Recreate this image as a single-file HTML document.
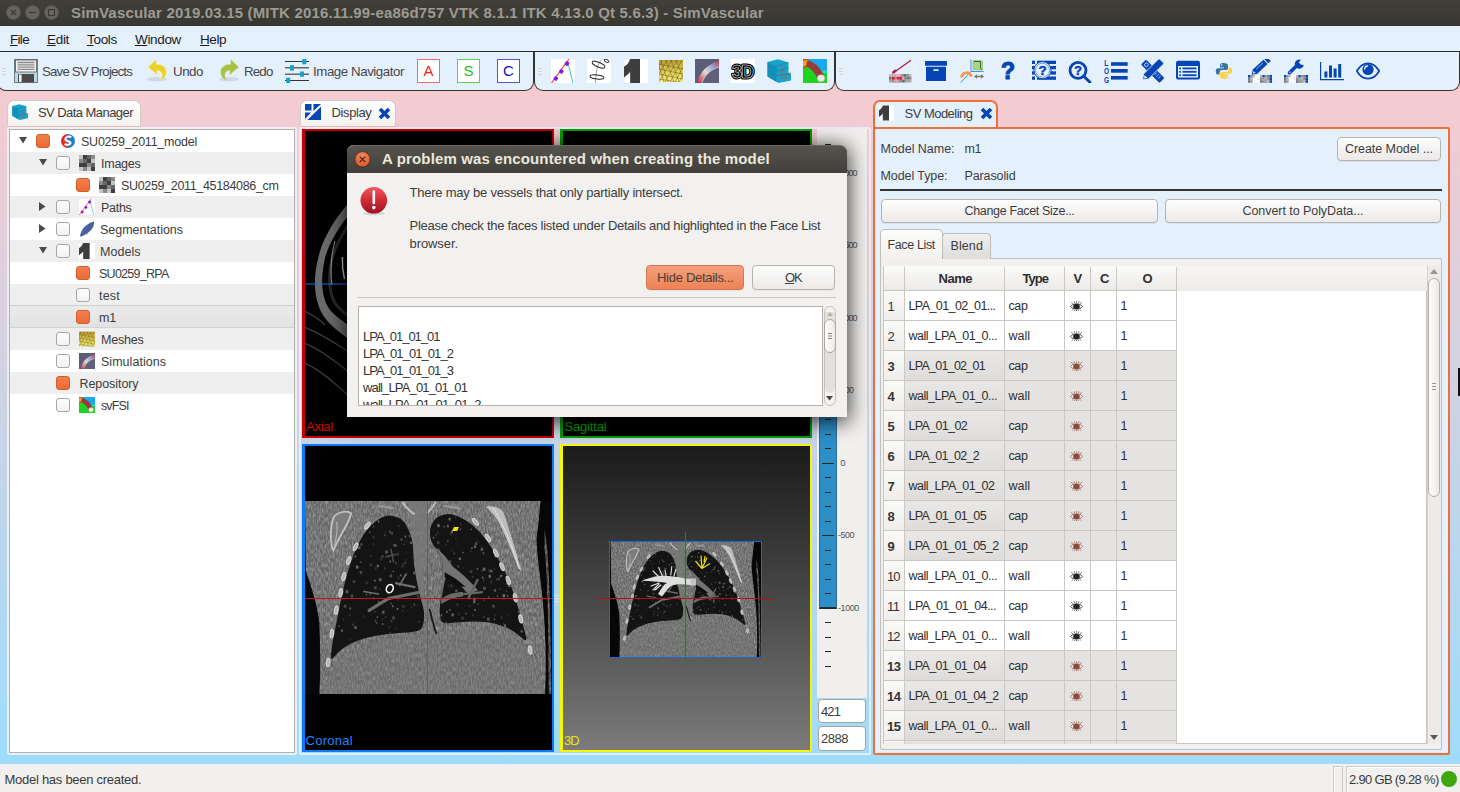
<!DOCTYPE html>
<html><head><meta charset="utf-8"><title>SimVascular</title>
<style>
*{box-sizing:border-box;margin:0;padding:0}
html,body{width:1460px;height:792px;overflow:hidden}
body{font-family:"Liberation Sans","DejaVu Sans",sans-serif;font-size:12.5px;color:#3c3c3c;position:relative;
 background:linear-gradient(180deg,#f5cbd0 0px,#f5cbd0 92px,#9edcfb 764px,#9edcfb 792px)}
.abs{position:absolute}
.t{position:absolute;white-space:nowrap;line-height:16px;height:16px}
#titlebar{left:0;top:0;width:1460px;height:26px;background:linear-gradient(180deg,#403f3a,#38372f)}
.wb{position:absolute;top:5px;width:15px;height:15px;border-radius:50%;background:#66645d;border:1px solid #55534d}
#menubar{left:0;top:26px;width:1460px;height:26px;background:#e5f0fd;border-bottom:1px solid #2a2a2a}
.tb{position:absolute;top:52px;height:39px;background:#e5f0fd;border:1px solid #333;border-top:none;border-radius:0 0 9px 9px}
.grip{position:absolute;top:68px;width:4px;height:7px;border-top:1px solid #dcd2c5;border-bottom:1px solid #dcd2c5}
.grip:after{content:"";position:absolute;left:0;top:2px;width:4px;height:1px;background:#dcd2c5}
.asc{position:absolute;top:59px;width:23px;height:24px;background:#fff;border:1px solid;font-size:15px;text-align:center;line-height:22px}
.ico{position:absolute;top:59px;width:24px;height:24px}
.tab{position:absolute;top:100px;height:26px;background:linear-gradient(180deg,#ffffff,#f3f1ef);border:1px solid #d2cdc7;border-bottom:none;border-radius:7px 7px 0 0}
.cb{position:absolute;width:14px;height:14px;border-radius:3px;border:1px solid #a9a59f;background:linear-gradient(180deg,#fdfdfd,#f4f3f2)}
.cb.on{border-color:#cf5f2c;background:linear-gradient(180deg,#f27f4d,#ec6a35)}
.row{position:absolute;left:11px;width:282px;height:22px}
.btn{position:absolute;border:1px solid #b7b3ad;border-radius:4px;background:linear-gradient(180deg,#fdfdfd,#eceae8);box-shadow:0 1px 0 rgba(0,0,0,.05)}
#statusbar{left:0;top:764px;width:1460px;height:28px;background:#f1f0ee}
</style></head><body>

<svg width="0" height="0" style="position:absolute"><defs>
<linearGradient id="gmesh" x1="0" y1="0" x2="0" y2="1"><stop offset="0" stop-color="#b99a2e"/><stop offset=".5" stop-color="#e3cf55"/><stop offset="1" stop-color="#f6ef7c"/></linearGradient>
<linearGradient id="gsim" x1="0" y1="1" x2="1" y2="0"><stop offset="0" stop-color="#c0283a"/><stop offset=".45" stop-color="#e9d9cf"/><stop offset=".7" stop-color="#9aa7d6"/><stop offset="1" stop-color="#c43a45"/></linearGradient>
<symbol id="s-path" viewBox="0 0 24 24"><rect width="24" height="24" fill="#fff"/><path d="M0.500 24L18 0" stroke="#ff3b3b" stroke-width="1.2"/><path d="M16.5 2.500L22 24" stroke="#35c8c8" stroke-width="1"/><g fill="#8d19e0"><rect x="2.800" y="17.500" width="4" height="4" rx="1.2" transform="rotate(35 4.8 19.5)"/><rect x="8.300" y="10.500" width="4" height="4" rx="1.2" transform="rotate(35 10.3 12.5)"/><rect x="14" y="2.500" width="4" height="4.200" rx="1.2" transform="rotate(35 16 4.5)"/></g></symbol>
<symbol id="s-seg" viewBox="0 0 24 24"><rect width="24" height="24" fill="#fff"/><path d="M8.500 24C8.500 12 11 4 15 0.500" fill="none" stroke="#666" stroke-width=".6"/><ellipse cx="11.500" cy="5.600" rx="6.800" ry="2.300" transform="rotate(24 11.5 5.6)" fill="none" stroke="#222" stroke-width="1"/><ellipse cx="10" cy="18" rx="7" ry="2" transform="rotate(6 10 18)" fill="none" stroke="#222" stroke-width="1"/><ellipse cx="19.500" cy="1.800" rx="2.600" ry="1.300" transform="rotate(30 19.5 1.8)" fill="none" stroke="#222" stroke-width=".9"/></symbol>
<symbol id="s-model" viewBox="0 0 24 24"><rect width="24" height="24" fill="#fff"/><path d="M6 0H16V24H6.500V12.500C5 14.500 2.500 16.500 0 18.500V7.500C2.500 6.500 5 4 6 0Z" fill="#3e3e3e"/><path d="M6.500 12.500V24" stroke="#2a2a2a" stroke-width=".6"/></symbol>
<symbol id="s-mesh" viewBox="0 0 24 22"><rect width="24" height="22" fill="url(#gmesh)"/><path d="M0 4l24 5M0 9l24 5M0 14l24 5M0 19l24 4M3 0l-3 6M8 0l-8 14M13 0L0 22M18 0L6 22M23 0L11 22M24 7l-8 15M24 15l-4 7M2 0l7 22M7 0l8 22M12 0l8 22M17 0l7 18M0 6l5 16" stroke="#4a3c10" stroke-width=".45" fill="none" opacity=".85"/></symbol>
<symbol id="s-sim" viewBox="0 0 24 24"><rect width="24" height="24" fill="#5b5d77"/><path d="M2 24C5 13 12 5 24 2V8C15 11 10 16 7 24Z" fill="url(#gsim)"/><path d="M7 24C10 16 15 11 24 8" stroke="#cfd6ee" stroke-width=".7" fill="none"/><path d="M8 24C11 17 16 13 24 11V24Z" fill="#5f607b"/></symbol>
<symbol id="s-3d" viewBox="0 0 24 24"><rect width="24" height="24" fill="#fff"/><g font-family="Liberation Sans,sans-serif" font-weight="bold" font-size="18" text-anchor="middle" style="letter-spacing:-1.2px"><text x="11.400" y="19.200" fill="#000" stroke="#000" stroke-width="3" stroke-linejoin="round">3D</text><text x="11.400" y="19.200" fill="#000" stroke="#fff" stroke-width=".550">3D</text></g></symbol>
<symbol id="s-cab" viewBox="0 0 24 24"><path d="M0.500 3L11 0.200L21.500 3.500V14.500L24 15.500V21.500L11.500 24L0.500 17.500Z" fill="#16a3cf"/><path d="M0.500 3L9.500 7V23L0.500 17.500Z" fill="#1390b8"/><path d="M9.500 7L21.500 3.500" stroke="#0f7fa3" stroke-width=".6"/><path d="M9.500 12l12-3M9.500 17l14.500-3" stroke="#0f7fa3" stroke-width=".7"/><path d="M13.500 8.300l4-1M13.500 13l4-1M15 19.500l5-1" stroke="#8a6f5e" stroke-width="1.300"/><path d="M9.500 16.800L23.800 14.800" stroke="#7a6a62" stroke-width="1.100"/></symbol>
<symbol id="s-fsi" viewBox="0 0 24 24"><rect width="24" height="24" fill="#21d321"/><path d="M3 0H24V12C20 13 16 10 14 7C10 3 6 2 3 0Z" fill="#19a9f2"/><path d="M15 11C18 12 22 12 24 11V14C21 14 18 14 16 13Z" fill="#22e0c8"/><path d="M0 0H5L6 6L0 10Z" fill="#f23a1e"/><path d="M0 2L4 1L5 5L0 8Z" fill="#f7a21e"/><path d="M5.500 1.500L8 2.500L7 4Z" fill="#2233dd"/><path d="M3.500 5C3 2.500 5.500 1.500 8 2.500C13 4.500 18.500 10 21 17L15 21C13 15 9 10.500 5 8.500C4 8 3.700 6.500 3.500 5Z" fill="#963c3c"/><ellipse cx="18" cy="19.200" rx="3.600" ry="3.400" fill="#f3e6e6" stroke="#e8bcbc" stroke-width=".6"/></symbol>
</defs></svg>

<!-- title bar -->
<div id="titlebar" class="abs">
 <div class="wb" style="left:6px"></div><div class="wb" style="left:25px"></div><div class="wb" style="left:44px"></div>
 <svg class="abs" style="left:6px;top:5px" width="54" height="15" viewBox="0 0 54 15"><path d="M5 5l5 5M10 5l-5 5" stroke="#3a3934" stroke-width="1.1"/><path d="M23 7.5h7" stroke="#3a3934" stroke-width="1.2"/><rect x="42.5" y="4.500" width="6" height="6" fill="none" stroke="#3a3934" stroke-width="1.1"/></svg>
<div class="t" style="left:71px;top:5px;font-size:15px;color:#9d9a92;font-weight:bold;letter-spacing:0.17px">SimVascular 2019.03.15 (MITK 2016.11.99-ea86d757 VTK 8.1.1 ITK 4.13.0 Qt 5.6.3) - SimVascular</div></div>
<!-- menu bar -->
<div id="menubar" class="abs"><div class="t" style="left:10px;top:5.5px;font-size:13.5px;color:#1c1c1c;letter-spacing:-0.69px"><u>F</u>ile</div><div class="t" style="left:47px;top:5.5px;font-size:13.5px;color:#1c1c1c;letter-spacing:-0.32px"><u>E</u>dit</div><div class="t" style="left:87px;top:5.5px;font-size:13.5px;color:#1c1c1c;letter-spacing:-0.30px"><u>T</u>ools</div><div class="t" style="left:135px;top:5.5px;font-size:13.5px;color:#1c1c1c;letter-spacing:-0.34px"><u>W</u>indow</div><div class="t" style="left:200px;top:5.5px;font-size:13.5px;color:#1c1c1c;letter-spacing:-0.44px"><u>H</u>elp</div></div>
<!-- toolbars -->
<div class="tb" style="left:-3px;width:537px"></div>
<div class="tb" style="left:534px;width:301px"></div>
<div class="tb" style="left:835px;width:625px"></div>
<div class="grip" style="left:2px"></div>
<div class="grip" style="left:538px"></div>
<div class="grip" style="left:839px"></div>
<svg class="ico" style="left:14px" viewBox="0 0 24 24"><rect x=".5" y=".5" width="23" height="23" fill="#b4dbe3" stroke="#6f7f86"/><rect x="1.5" y="1" width="21" height="12" fill="#f2f2f2" stroke="#555" stroke-width=".8"/><path d="M3.5 3.5h17M3.5 5.8h17M3.5 8.1h17M3.5 10.4h17" stroke="#8a8a8a" stroke-width="1.3"/><rect x="4" y="15" width="16" height="8.5" fill="#4a4a4a"/><rect x="5" y="15.5" width="2.6" height="7.5" fill="#f0f0f0"/></svg>
<svg class="ico" style="left:145px;top:58px;width:26px;height:26px" viewBox="0 0 24 24"><ellipse cx="11" cy="19.5" rx="9" ry="2" fill="#c9d3de" opacity=".8"/><path d="M3 8.5 L10 1.5 L10.5 6 C17 5.5 20.5 10 19.5 14.500 C18.7 18 16.5 20 14 20.5 C16 18 16.5 15 15 13 C14 11.8 12.5 11.3 11 11.5 L11.5 15.5 Z" fill="#e9d32a" stroke="#f3e98a" stroke-width=".6"/></svg>
<svg class="ico" style="left:216px;top:58px;width:26px;height:26px" viewBox="0 0 24 24"><ellipse cx="12" cy="19.5" rx="9" ry="2" fill="#c9d3de" opacity=".8"/><path d="M21 8.5 L14 1.5 L13.5 6 C7 5.5 3.5 10 4.5 14.500 C5.3 18 7.5 20 10 20.5 C8 18 7.5 15 9 13 C10 11.8 11.5 11.3 13 11.5 L12.5 15.5 Z" fill="#a9c043" stroke="#c8d88a" stroke-width=".6"/></svg>
<svg class="ico" style="left:285px" viewBox="0 0 24 24"><path d="M0 2.500h24M0 21.500h24" stroke="#333" stroke-width="1.200"/><path d="M0 8.800h24M0 15.200h24" stroke="#666" stroke-width="1.400"/><g fill="#10a3cf"><rect x="17.300" y="0" width="4" height="5.300"/><rect x="5" y="6.200" width="4" height="5.400"/><rect x="15" y="12.500" width="4" height="5.300"/><rect x="1.200" y="18.700" width="4" height="5.300"/></g></svg>
<div class="asc" style="left:417px;border-color:#f26a6a;color:#ee2222">A</div>
<div class="asc" style="left:457px;border-color:#55d455;color:#22bb22">S</div>
<div class="asc" style="left:497px;border-color:#5555cc;color:#1111cc">C</div>
<div class="t" style="left:42px;top:63.5px;font-size:13.3px;color:#474747;letter-spacing:-0.84px">Save SV Projects</div><div class="t" style="left:173px;top:63.5px;font-size:13.3px;color:#474747;letter-spacing:-0.45px">Undo</div><div class="t" style="left:244px;top:63.5px;font-size:13.3px;color:#474747;letter-spacing:-0.82px">Redo</div><div class="t" style="left:313px;top:63.5px;font-size:13.3px;color:#474747;letter-spacing:-0.44px">Image Navigator</div><svg class="ico" style="left:551px"><use href="#s-path"/></svg><svg class="ico" style="left:587px"><use href="#s-seg"/></svg><svg class="ico" style="left:624px"><use href="#s-model"/></svg><svg class="ico" style="left:659px;top:60px;height:22px"><use href="#s-mesh"/></svg><svg class="ico" style="left:695px"><use href="#s-sim"/></svg><svg class="ico" style="left:731px"><use href="#s-3d"/></svg><svg class="ico" style="left:767px"><use href="#s-cab"/></svg><svg class="ico" style="left:803px"><use href="#s-fsi"/></svg><svg class="ico" style="left:888px" viewBox="0 0 24 24"><path d="M23 1.200L7.500 12.300" stroke="#b5173f" stroke-width="1.300"/><ellipse cx="6.300" cy="12.600" rx="2.700" ry="1.300" transform="rotate(-36 6.3 12.6)" fill="#b5173f"/><rect x="1.00" y="15.00" width="2.50" height="2.83" fill="#bdbdbd"/><rect x="3.50" y="15.00" width="2.50" height="2.83" fill="#a5a5a5"/><rect x="6.00" y="15.00" width="2.50" height="2.83" fill="#7a7a7a"/><rect x="8.50" y="15.00" width="2.50" height="2.83" fill="#b0b0b0"/><rect x="11.00" y="15.00" width="2.50" height="2.83" fill="#8d8d8d"/><rect x="13.50" y="15.00" width="2.50" height="2.83" fill="#8d8d8d"/><rect x="16.00" y="15.00" width="2.50" height="2.83" fill="#6e6e6e"/><rect x="18.50" y="15.00" width="2.50" height="2.83" fill="#8d8d8d"/><rect x="21.00" y="15.00" width="2.50" height="2.83" fill="#bdbdbd"/><rect x="1.00" y="17.83" width="2.50" height="2.83" fill="#6e6e6e"/><rect x="3.50" y="17.83" width="2.50" height="2.83" fill="#8d8d8d"/><rect x="6.00" y="17.83" width="2.50" height="2.83" fill="#6e6e6e"/><rect x="8.50" y="17.83" width="2.50" height="2.83" fill="#a5a5a5"/><rect x="11.00" y="17.83" width="2.50" height="2.83" fill="#8d8d8d"/><rect x="13.50" y="17.83" width="2.50" height="2.83" fill="#8d8d8d"/><rect x="16.00" y="17.83" width="2.50" height="2.83" fill="#7a7a7a"/><rect x="18.50" y="17.83" width="2.50" height="2.83" fill="#7a7a7a"/><rect x="21.00" y="17.83" width="2.50" height="2.83" fill="#8d8d8d"/><rect x="1.00" y="20.67" width="2.50" height="2.83" fill="#a5a5a5"/><rect x="3.50" y="20.67" width="2.50" height="2.83" fill="#8d8d8d"/><rect x="6.00" y="20.67" width="2.50" height="2.83" fill="#6e6e6e"/><rect x="8.50" y="20.67" width="2.50" height="2.83" fill="#7a7a7a"/><rect x="11.00" y="20.67" width="2.50" height="2.83" fill="#8d8d8d"/><rect x="13.50" y="20.67" width="2.50" height="2.83" fill="#6e6e6e"/><rect x="16.00" y="20.67" width="2.50" height="2.83" fill="#8d8d8d"/><rect x="18.50" y="20.67" width="2.50" height="2.83" fill="#a5a5a5"/><rect x="21.00" y="20.67" width="2.50" height="2.83" fill="#b0b0b0"/><rect x="4" y="17.800" width="2.500" height="2.800" fill="#d91f45"/><rect x="6.500" y="17.800" width="2.500" height="2.800" fill="#e86a84"/><rect x="9" y="17.800" width="2.500" height="2.800" fill="#d91f45"/><rect x="11.500" y="17.800" width="2.500" height="2.800" fill="#d91f45"/><rect x="14" y="17.800" width="2.500" height="2.800" fill="#e3a0ae"/><rect x="5" y="15" width="8" height="2.800" fill="#f3b6c4" opacity=".7"/><rect x="6" y="20.600" width="5" height="2.800" fill="#f3b6c4" opacity=".7"/></svg><svg class="ico" style="left:924px" viewBox="0 0 24 24"><rect x="1" y="2" width="22" height="4.800" rx=".6" fill="#0645b4"/><rect x="2" y="7.800" width="20" height="14.200" rx=".6" fill="#0645b4"/><rect x="9.400" y="10.300" width="5.200" height="1.800" rx=".5" fill="#e5f0fd"/></svg><svg class="ico" style="left:960px" viewBox="0 0 24 24"><path d="M11 0.500V12.500H23.500M11 12.500L0.700 23.500" fill="none" stroke="#2a8ae0" stroke-width=".9"/><rect x="13" y="1.700" width="9.300" height="9.300" fill="#a6d48a" stroke="#86c060" stroke-width=".6"/><path d="M14 2.500H20.500V9M20.500 9L22 10.800" stroke="#2f5f20" stroke-width=".9" fill="none"/><path d="M1.500 18.500C2 13.500 9 11.500 11.500 17.500" fill="none" stroke="#f39a5a" stroke-width="2.900"/><path d="M14 17.500l3-2.300v1.500h4v-1.500l3 2.300l-3 2.300v-1.500h-4v1.500z" fill="#777"/></svg><div class="abs" style="left:996px;top:59px;width:24px;height:24px;text-align:center;font-weight:bold;font-size:23px;line-height:25px;color:#0645b4;-webkit-text-stroke:1.100px #0645b4">?</div><svg class="ico" style="left:1032px" viewBox="0 0 24 24"><g fill="#0645b4"><rect x="0" y="1.700" width="3" height="3.300"/><rect x="0" y="7" width="3" height="3.300"/><rect x="0" y="12.300" width="3" height="3.300"/><rect x="0" y="17.500" width="3" height="3.300"/><rect x="5" y="1.700" width="19" height="3.300"/><rect x="5" y="7" width="19" height="3.300"/><rect x="5" y="12.300" width="19" height="3.300"/><rect x="5" y="17.500" width="19" height="3.300"/></g><circle cx="10.500" cy="11.200" r="8.600" fill="#e5f0fd" stroke="#0645b4" stroke-width="1"/><circle cx="10.500" cy="11.200" r="7" fill="none" stroke="#0645b4" stroke-width=".5"/><text x="10.500" y="16" text-anchor="middle" font-family="Liberation Sans,sans-serif" font-weight="bold" font-size="13.500" fill="#0645b4" stroke="#0645b4" stroke-width=".4">?</text></svg><svg class="ico" style="left:1068px" viewBox="0 0 24 24"><circle cx="10" cy="11.300" r="8" fill="none" stroke="#0645b4" stroke-width="2.800"/><path d="M16 17.500L21.800 23" stroke="#0645b4" stroke-width="3" stroke-linecap="round"/><text x="10" y="15.800" text-anchor="middle" font-family="Liberation Sans,sans-serif" font-weight="bold" font-size="12.500" fill="#0645b4" stroke="#0645b4" stroke-width=".5">?</text></svg><svg class="ico" style="left:1104px" viewBox="0 0 24 24"><g font-family="Liberation Sans,sans-serif" font-weight="bold" font-size="8.200" fill="#0645b4" transform="scale(.8 1)"><text x="0.300" y="6.600">L</text><text x="0" y="15.300">O</text><text x="0" y="24">G</text></g><g fill="#0645b4"><rect x="7" y="3.200" width="16.700" height="3.600"/><rect x="7" y="10" width="16.700" height="3.700"/><rect x="7" y="17" width="16.700" height="3.600"/></g></svg><svg class="ico" style="left:1140px" viewBox="0 0 24 24"><g transform="rotate(45 12 11.500)"><rect x="0" y="8" width="26" height="7" rx="1" fill="#0645b4"/><path d="M17 9.500v3M19.500 9.500v3M22 9.500v3" stroke="#e5f0fd" stroke-width=".8"/><circle cx="4" cy="11.500" r="1.800" fill="none" stroke="#e5f0fd" stroke-width=".8"/></g><g transform="rotate(-45 12 11.500)"><path d="M-1 11.500L3.500 8H24.500a1 1 0 0 1 1 1V14a1 1 0 0 1 -1 1H3.500Z" fill="#0645b4" stroke="#e5f0fd" stroke-width=".8"/><path d="M0.800 11.500L3.500 9.300V13.700Z" fill="#e5f0fd"/></g></svg><svg class="ico" style="left:1176px" viewBox="0 0 24 24"><rect x="0" y="1.700" width="24" height="18.800" rx="2" fill="#0645b4"/><rect x="2" y="7" width="20" height="11.500" fill="#e5f0fd"/><g fill="#0645b4"><rect x="3.300" y="8.500" width="1.700" height="1.800"/><rect x="3.300" y="11.900" width="1.700" height="1.800"/><rect x="3.300" y="15.300" width="1.700" height="1.800"/><rect x="6.500" y="8.500" width="14" height="1.800"/><rect x="6.500" y="11.900" width="14" height="1.800"/><rect x="6.500" y="15.300" width="14" height="1.800"/></g></svg><svg class="ico" style="left:1212px" viewBox="0 0 24 24"><path d="M11.500 4C8.500 4 8 5.200 8 6.500V8.500H12V9.300H6C4.500 9.300 3.800 10.500 3.800 12.500C3.800 14.500 4.500 15.500 6 15.500H7.500V13.500C7.500 12 8.700 11 10 11H14C15.200 11 16 10.200 16 9V6.500C16 5 14.500 4 11.500 4Z" fill="#3872a4"/><circle cx="9.700" cy="6" r=".8" fill="#e5f0fd"/><path d="M12.500 20C15.500 20 16 18.800 16 17.500V15.500H12V14.700H18C19.500 14.700 20.200 13.500 20.200 11.500C20.200 9.500 19.500 8.500 18 8.500H16.500V10.500C16.500 12 15.300 13 14 13H10C8.800 13 8 13.800 8 15V17.500C8 19 9.500 20 12.500 20Z" fill="#ffd23f"/><circle cx="14.300" cy="18" r=".8" fill="#e5f0fd"/></svg><svg class="ico" style="left:1248px" viewBox="0 0 24 24"><g transform="rotate(-43 12 8)"><path d="M0.500 8L5 5H19.500V11H5Z" fill="#0645b4"/><rect x="20.500" y="5" width="3.500" height="6" rx=".8" fill="#0645b4"/><path d="M2 8L4.600 6.600V9.400Z" fill="#e5f0fd"/><path d="M8 7h9" stroke="#e5f0fd" stroke-width=".6"/></g><rect x="0.0" y="16.0" width="2.400" height="2.600" fill="#0645b4"/><rect x="2.4" y="16.0" width="2.400" height="2.600" fill="#8c8c8c"/><rect x="4.8" y="16.0" width="2.400" height="2.600" fill="#c4c4c4"/><rect x="7.2" y="16.0" width="2.400" height="2.600" fill="#fbfbfb"/><rect x="9.6" y="16.0" width="2.400" height="2.600" fill="#fbfbfb"/><rect x="12.0" y="16.0" width="2.400" height="2.600" fill="#b0b0b0"/><rect x="14.4" y="16.0" width="2.400" height="2.600" fill="#0645b4"/><rect x="16.8" y="16.0" width="2.400" height="2.600" fill="#9c9c9c"/><rect x="19.2" y="16.0" width="2.400" height="2.600" fill="#777"/><rect x="21.6" y="16.0" width="2.400" height="2.600" fill="#0645b4"/><rect x="0.0" y="18.6" width="2.400" height="2.600" fill="#777"/><rect x="2.4" y="18.6" width="2.400" height="2.600" fill="#b0b0b0"/><rect x="4.8" y="18.6" width="2.400" height="2.600" fill="#fbfbfb"/><rect x="7.2" y="18.6" width="2.400" height="2.600" fill="#fbfbfb"/><rect x="9.6" y="18.6" width="2.400" height="2.600" fill="#e8e8e8"/><rect x="12.0" y="18.6" width="2.400" height="2.600" fill="#8c8c8c"/><rect x="14.4" y="18.6" width="2.400" height="2.600" fill="#9c9c9c"/><rect x="16.8" y="18.6" width="2.400" height="2.600" fill="#b0b0b0"/><rect x="19.2" y="18.6" width="2.400" height="2.600" fill="#8c8c8c"/><rect x="21.6" y="18.6" width="2.400" height="2.600" fill="#0645b4"/><rect x="0.0" y="21.2" width="2.400" height="2.600" fill="#777"/><rect x="2.4" y="21.2" width="2.400" height="2.600" fill="#9c9c9c"/><rect x="4.8" y="21.2" width="2.400" height="2.600" fill="#fbfbfb"/><rect x="7.2" y="21.2" width="2.400" height="2.600" fill="#fbfbfb"/><rect x="9.6" y="21.2" width="2.400" height="2.600" fill="#fbfbfb"/><rect x="12.0" y="21.2" width="2.400" height="2.600" fill="#777"/><rect x="14.4" y="21.2" width="2.400" height="2.600" fill="#8c8c8c"/><rect x="16.8" y="21.2" width="2.400" height="2.600" fill="#9c9c9c"/><rect x="19.2" y="21.2" width="2.400" height="2.600" fill="#b0b0b0"/><rect x="21.6" y="21.2" width="2.400" height="2.600" fill="#0645b4"/></svg><svg class="ico" style="left:1284px" viewBox="0 0 24 24"><path d="M5.500 13.800L14 5.500" stroke="#0645b4" stroke-width="3.600" stroke-linecap="round"/><path d="M19.800 6.300A4.600 4.600 0 1 1 16.800 0.700L14.800 3.700L16.800 5.600Z" fill="#0645b4"/><circle cx="6" cy="13.300" r=".7" fill="#e5f0fd"/><rect x="0.0" y="16.0" width="2.400" height="2.600" fill="#0645b4"/><rect x="2.4" y="16.0" width="2.400" height="2.600" fill="#8c8c8c"/><rect x="4.8" y="16.0" width="2.400" height="2.600" fill="#c4c4c4"/><rect x="7.2" y="16.0" width="2.400" height="2.600" fill="#fbfbfb"/><rect x="9.6" y="16.0" width="2.400" height="2.600" fill="#fbfbfb"/><rect x="12.0" y="16.0" width="2.400" height="2.600" fill="#b0b0b0"/><rect x="14.4" y="16.0" width="2.400" height="2.600" fill="#0645b4"/><rect x="16.8" y="16.0" width="2.400" height="2.600" fill="#9c9c9c"/><rect x="19.2" y="16.0" width="2.400" height="2.600" fill="#777"/><rect x="21.6" y="16.0" width="2.400" height="2.600" fill="#0645b4"/><rect x="0.0" y="18.6" width="2.400" height="2.600" fill="#777"/><rect x="2.4" y="18.6" width="2.400" height="2.600" fill="#b0b0b0"/><rect x="4.8" y="18.6" width="2.400" height="2.600" fill="#fbfbfb"/><rect x="7.2" y="18.6" width="2.400" height="2.600" fill="#fbfbfb"/><rect x="9.6" y="18.6" width="2.400" height="2.600" fill="#e8e8e8"/><rect x="12.0" y="18.6" width="2.400" height="2.600" fill="#8c8c8c"/><rect x="14.4" y="18.6" width="2.400" height="2.600" fill="#9c9c9c"/><rect x="16.8" y="18.6" width="2.400" height="2.600" fill="#b0b0b0"/><rect x="19.2" y="18.6" width="2.400" height="2.600" fill="#8c8c8c"/><rect x="21.6" y="18.6" width="2.400" height="2.600" fill="#0645b4"/><rect x="0.0" y="21.2" width="2.400" height="2.600" fill="#777"/><rect x="2.4" y="21.2" width="2.400" height="2.600" fill="#9c9c9c"/><rect x="4.8" y="21.2" width="2.400" height="2.600" fill="#fbfbfb"/><rect x="7.2" y="21.2" width="2.400" height="2.600" fill="#fbfbfb"/><rect x="9.6" y="21.2" width="2.400" height="2.600" fill="#fbfbfb"/><rect x="12.0" y="21.2" width="2.400" height="2.600" fill="#777"/><rect x="14.4" y="21.2" width="2.400" height="2.600" fill="#8c8c8c"/><rect x="16.8" y="21.2" width="2.400" height="2.600" fill="#9c9c9c"/><rect x="19.2" y="21.2" width="2.400" height="2.600" fill="#b0b0b0"/><rect x="21.6" y="21.2" width="2.400" height="2.600" fill="#0645b4"/></svg><svg class="ico" style="left:1320px" viewBox="0 0 24 24"><path d="M0.600 3V20.700H24" fill="none" stroke="#0645b4" stroke-width="1.200"/><g fill="#0645b4"><rect x="4.400" y="12.500" width="3" height="6"/><rect x="9" y="6.500" width="3" height="12"/><rect x="13.600" y="9.500" width="3" height="9"/><rect x="18.200" y="5" width="3" height="13.500"/></g></svg><svg class="ico" style="left:1356px" viewBox="0 0 24 24"><path d="M0.800 12C4 6.500 8 4.300 12 4.300C16 4.300 20 6.500 23.200 12C20 17.500 16 19.700 12 19.700C8 19.700 4 17.500 0.800 12Z" fill="#e5f0fd" stroke="#0645b4" stroke-width="1.700"/><circle cx="12" cy="10.500" r="5.600" fill="#0645b4"/><path d="M8.600 10A3.300 3.300 0 0 1 11.500 7" stroke="#e5f0fd" stroke-width="1.300" fill="none" stroke-linecap="round"/></svg>
<!-- SV Data Manager -->
<div class="tab" style="left:7px;width:134px"></div><div class="abs" style="left:8px;top:126px;width:133px;height:1px;background:#e9b9bf"></div><svg class="abs" style="left:12px;top:104px" width="16" height="16"><use href="#s-cab"/></svg><div class="t" style="left:38px;top:104.5px;font-size:13px;letter-spacing:-0.56px">SV Data Manager</div><div class="abs" style="left:7px;top:127px;width:290px;height:628px;border:2px solid rgba(240,243,250,.85);border-radius:2px"></div><div class="abs" style="left:9px;top:129px;width:286px;height:624px;background:#fff;border:1px solid #b4afa9"></div><div class="row" style="left:10px;width:284px;top:152px;background:#efefef"></div><div class="row" style="left:10px;width:284px;top:196px;background:#efefef"></div><div class="row" style="left:10px;width:284px;top:240px;background:#efefef"></div><div class="row" style="left:10px;width:284px;top:284px;background:#efefef"></div><div class="row" style="left:10px;width:284px;top:305px;height:23px;background:linear-gradient(180deg,#ebebeb,#e2e2e2);border-top:1px solid #cfcfcf;border-bottom:1px solid #d4d4d4"></div><div class="row" style="left:10px;width:284px;top:328px;background:#efefef"></div><div class="row" style="left:10px;width:284px;top:372px;background:#efefef"></div><svg class="abs" style="left:19px;top:137px" width="8" height="7"><path d="M0 0H8L4 6.500Z" fill="#4a4a4a"/></svg><div class="cb on" style="left:36px;top:134px"></div><svg class="abs" style="left:61px;top:134px" width="14" height="14" viewBox="0 0 14 14"><path d="M7 0A7 7 0 0 0 7 14Z" fill="#e02a2a"/><path d="M7 0A7 7 0 0 1 7 14Z" fill="#1f7fc8"/><path d="M10.300 3.200C8 1.800 4.600 2.600 4.400 5C4.200 7.500 9.600 6.800 9.500 9C9.400 11 6 11.300 3.600 10" fill="none" stroke="#fff" stroke-width="2.100"/></svg><div class="t" style="left:81px;top:134px;letter-spacing:-0.24px">SU0259_2011_model</div><svg class="abs" style="left:39px;top:159px" width="8" height="7"><path d="M0 0H8L4 6.500Z" fill="#4a4a4a"/></svg><div class="cb" style="left:56px;top:156px"></div><svg class="abs" style="left:79px;top:155px" width="16" height="16" viewBox="0 0 16 16"><rect width="16" height="16" fill="#8a8a8a"/><g fill="#3f3f3f"><rect x="4" y="0" width="4" height="4"/><rect x="8" y="4" width="4" height="4"/><rect x="0" y="8" width="4" height="4"/><rect x="12" y="12" width="4" height="4"/><rect x="4" y="8" width="4" height="4"/></g><g fill="#c4c4c4"><rect x="0" y="0" width="4" height="4"/><rect x="12" y="4" width="4" height="4"/><rect x="8" y="12" width="4" height="4"/><rect x="0" y="12" width="4" height="4"/></g><g fill="#666"><rect x="8" y="0" width="4" height="4"/><rect x="4" y="4" width="4" height="4"/><rect x="12" y="8" width="4" height="4"/></g></svg><div class="t" style="left:101px;top:156px;letter-spacing:-0.25px">Images</div><div class="cb on" style="left:76px;top:178px"></div><svg class="abs" style="left:99px;top:177px" width="16" height="16" viewBox="0 0 16 16"><rect width="16" height="16" fill="#8a8a8a"/><g fill="#3f3f3f"><rect x="4" y="0" width="4" height="4"/><rect x="8" y="4" width="4" height="4"/><rect x="0" y="8" width="4" height="4"/><rect x="12" y="12" width="4" height="4"/><rect x="4" y="8" width="4" height="4"/></g><g fill="#c4c4c4"><rect x="0" y="0" width="4" height="4"/><rect x="12" y="4" width="4" height="4"/><rect x="8" y="12" width="4" height="4"/><rect x="0" y="12" width="4" height="4"/></g><g fill="#666"><rect x="8" y="0" width="4" height="4"/><rect x="4" y="4" width="4" height="4"/><rect x="12" y="8" width="4" height="4"/></g></svg><div class="t" style="left:121px;top:178px;letter-spacing:-0.33px">SU0259_2011_45184086_cm</div><svg class="abs" style="left:39px;top:202px" width="7" height="9"><path d="M0 0L6.500 4.500L0 9Z" fill="#4a4a4a"/></svg><div class="cb" style="left:56px;top:200px"></div><svg class="abs" style="left:79px;top:199px" width="16" height="16"><use href="#s-path"/></svg><div class="t" style="left:101px;top:200px;letter-spacing:-0.29px">Paths</div><svg class="abs" style="left:39px;top:224px" width="7" height="9"><path d="M0 0L6.500 4.500L0 9Z" fill="#4a4a4a"/></svg><div class="cb" style="left:56px;top:222px"></div><svg class="abs" style="left:79px;top:221px" width="16" height="16" viewBox="0 0 16 16"><path d="M1 15.500C2 9 6 3 15 0.500C15.500 5 13 9 8 12.500C6 14 3 15.500 1 15.500Z" fill="#3f63a8"/><path d="M4 9.500l5 4M7.500 5.500l5 4M11 2.500l3.500 3.500" stroke="#c0392b" stroke-width=".6"/></svg><div class="t" style="left:100px;top:222px;letter-spacing:-0.03px">Segmentations</div><svg class="abs" style="left:39px;top:247px" width="8" height="7"><path d="M0 0H8L4 6.500Z" fill="#4a4a4a"/></svg><div class="cb" style="left:56px;top:244px"></div><svg class="abs" style="left:79px;top:243px" width="16" height="16"><use href="#s-model"/></svg><div class="t" style="left:100px;top:244px;letter-spacing:0.03px">Models</div><div class="cb on" style="left:76px;top:266px"></div><div class="t" style="left:99px;top:266px;letter-spacing:-0.74px">SU0259_RPA</div><div class="cb" style="left:76px;top:288px"></div><div class="t" style="left:99px;top:288px;letter-spacing:0.21px">test</div><div class="cb on" style="left:76px;top:310px"></div><div class="t" style="left:99px;top:310px;letter-spacing:-0.19px">m1</div><div class="cb" style="left:56px;top:332px"></div><svg class="abs" style="left:79px;top:331px" width="16" height="16"><use href="#s-mesh"/></svg><div class="t" style="left:101px;top:332px;letter-spacing:-0.21px">Meshes</div><div class="cb" style="left:56px;top:354px"></div><svg class="abs" style="left:79px;top:353px" width="16" height="16"><use href="#s-sim"/></svg><div class="t" style="left:101px;top:354px;letter-spacing:0.03px">Simulations</div><div class="cb on" style="left:56px;top:376px"></div><div class="t" style="left:79.5px;top:376px;letter-spacing:-0.07px">Repository</div><div class="cb" style="left:56px;top:398px"></div><svg class="abs" style="left:79px;top:397px" width="16" height="16"><use href="#s-fsi"/></svg><div class="t" style="left:101px;top:398px;letter-spacing:-0.89px">svFSI</div>
<svg width="0" height="0" style="position:absolute"><defs>
<filter id="grain" x="0" y="0" width="100%" height="100%"><feTurbulence type="fractalNoise" baseFrequency=".17 .055" numOctaves="2" seed="4" result="n"/><feColorMatrix in="n" type="matrix" values="0 0 0 0 0  0 0 0 0 0  0 0 0 0 0  .22 .22 .22 0 -.27" result="a"/><feFlood flood-color="#fff" result="w"/><feComposite in="w" in2="a" operator="in" result="g"/><feComposite in="g" in2="SourceGraphic" operator="in" result="gg"/><feMerge><feMergeNode in="SourceGraphic"/><feMergeNode in="gg"/></feMerge></filter>
<clipPath id="lclip"><path d="M330.0 66.0Q350.0 62.0 375.0 71.0Q400.0 80.0 412.5 105.0Q425.0 130.0 432.5 155.0Q440.0 180.0 440.0 215.0Q440.0 250.0 447.5 290.0Q455.0 330.0 462.5 365.0Q470.0 400.0 477.5 425.0Q485.0 450.0 483.5 475.0Q482.0 500.0 476.0 513.5Q470.0 527.0 445.0 531.0Q420.0 535.0 375.0 537.5Q330.0 540.0 290.0 547.5Q250.0 555.0 215.0 567.5Q180.0 580.0 155.0 600.0Q130.0 620.0 118.0 636.0Q106.0 652.0 109.5 616.0Q113.0 580.0 121.5 540.0Q130.0 500.0 137.5 460.0Q145.0 420.0 152.5 385.0Q160.0 350.0 172.5 305.0Q185.0 260.0 200.0 220.0Q215.0 180.0 237.5 145.0Q260.0 110.0 285.0 90.0Q310.0 70.0 330.0 66.0Z"/><path d="M620.0 67.5Q590.0 55.0 565.0 60.0Q540.0 65.0 525.0 82.5Q510.0 100.0 507.5 125.0Q505.0 150.0 512.5 167.5Q520.0 185.0 532.5 200.0Q545.0 215.0 552.5 237.5Q560.0 260.0 557.5 295.0Q555.0 330.0 553.5 360.0Q552.0 390.0 548.5 415.0Q545.0 440.0 547.5 470.0Q550.0 500.0 575.0 497.5Q600.0 495.0 650.0 491.5Q700.0 488.0 740.0 494.0Q780.0 500.0 815.0 515.0Q850.0 530.0 876.0 556.0Q902.0 582.0 891.0 541.0Q880.0 500.0 870.0 465.0Q860.0 430.0 847.5 390.0Q835.0 350.0 817.5 310.0Q800.0 270.0 780.0 235.0Q760.0 200.0 735.0 165.0Q710.0 130.0 680.0 105.0Q650.0 80.0 620.0 67.5Z"/></clipPath>
<symbol id="s-ct" viewBox="0 6 998 776" preserveAspectRatio="none"><rect x="0" y="0" width="998" height="790" fill="#070707"/>
<g filter="url(#grain)"><path d="M4 6H952C946 60 944 100 936 150C934 200 950 300 960 400C972 520 976 650 970 782H62C66 700 66 600 62 500C56 430 30 350 8 290Z" fill="#656565"/><path d="M968 120C985 200 992 400 996 782H985C984 500 980 300 968 200Z" fill="#3a3a3a"/></g>
<path d="M140 640C300 540 480 520 560 560C640 500 800 500 900 600L972 782H62Z" fill="#767676" opacity=".35"/>
<path d="M330.0 66.0Q350.0 62.0 375.0 71.0Q400.0 80.0 412.5 105.0Q425.0 130.0 432.5 155.0Q440.0 180.0 440.0 215.0Q440.0 250.0 447.5 290.0Q455.0 330.0 462.5 365.0Q470.0 400.0 477.5 425.0Q485.0 450.0 483.5 475.0Q482.0 500.0 476.0 513.5Q470.0 527.0 445.0 531.0Q420.0 535.0 375.0 537.5Q330.0 540.0 290.0 547.5Q250.0 555.0 215.0 567.5Q180.0 580.0 155.0 600.0Q130.0 620.0 118.0 636.0Q106.0 652.0 109.5 616.0Q113.0 580.0 121.5 540.0Q130.0 500.0 137.5 460.0Q145.0 420.0 152.5 385.0Q160.0 350.0 172.5 305.0Q185.0 260.0 200.0 220.0Q215.0 180.0 237.5 145.0Q260.0 110.0 285.0 90.0Q310.0 70.0 330.0 66.0Z" fill="#141414"/><path d="M620.0 67.5Q590.0 55.0 565.0 60.0Q540.0 65.0 525.0 82.5Q510.0 100.0 507.5 125.0Q505.0 150.0 512.5 167.5Q520.0 185.0 532.5 200.0Q545.0 215.0 552.5 237.5Q560.0 260.0 557.5 295.0Q555.0 330.0 553.5 360.0Q552.0 390.0 548.5 415.0Q545.0 440.0 547.5 470.0Q550.0 500.0 575.0 497.5Q600.0 495.0 650.0 491.5Q700.0 488.0 740.0 494.0Q780.0 500.0 815.0 515.0Q850.0 530.0 876.0 556.0Q902.0 582.0 891.0 541.0Q880.0 500.0 870.0 465.0Q860.0 430.0 847.5 390.0Q835.0 350.0 817.5 310.0Q800.0 270.0 780.0 235.0Q760.0 200.0 735.0 165.0Q710.0 130.0 680.0 105.0Q650.0 80.0 620.0 67.5Z" fill="#141414"/>
<g clip-path="url(#lclip)"><rect x="277" y="392" width="8" height="10" fill="#333"/><rect x="298" y="409" width="6" height="8" fill="#6a6a6a"/><rect x="286" y="424" width="6" height="8" fill="#3c3c3c"/><rect x="275" y="146" width="10" height="12" fill="#2c2c2c"/><rect x="346" y="413" width="8" height="10" fill="#333"/><rect x="354" y="425" width="6" height="8" fill="#6a6a6a"/><rect x="282" y="322" width="6" height="8" fill="#6a6a6a"/><rect x="195" y="236" width="5" height="6" fill="#2c2c2c"/><rect x="260" y="387" width="5" height="6" fill="#2c2c2c"/><rect x="202" y="509" width="10" height="12" fill="#5c5c5c"/><rect x="375" y="310" width="10" height="12" fill="#2c2c2c"/><rect x="181" y="460" width="6" height="8" fill="#3c3c3c"/><rect x="157" y="479" width="5" height="6" fill="#3c3c3c"/><rect x="282" y="349" width="10" height="12" fill="#4a4a4a"/><rect x="276" y="175" width="6" height="8" fill="#333"/><rect x="350" y="131" width="8" height="10" fill="#4a4a4a"/><rect x="334" y="402" width="5" height="6" fill="#4a4a4a"/><rect x="399" y="256" width="6" height="8" fill="#333"/><rect x="327" y="205" width="10" height="12" fill="#5c5c5c"/><rect x="247" y="329" width="10" height="12" fill="#333"/><rect x="421" y="142" width="8" height="10" fill="#4a4a4a"/><rect x="344" y="245" width="6" height="8" fill="#6a6a6a"/><rect x="440" y="418" width="8" height="10" fill="#3c3c3c"/><rect x="373" y="214" width="10" height="12" fill="#333"/><rect x="379" y="103" width="6" height="8" fill="#333"/><rect x="339" y="227" width="6" height="8" fill="#2c2c2c"/><rect x="323" y="140" width="6" height="8" fill="#4a4a4a"/><rect x="355" y="470" width="10" height="12" fill="#4a4a4a"/><rect x="286" y="273" width="6" height="8" fill="#3c3c3c"/><rect x="289" y="493" width="6" height="8" fill="#4a4a4a"/><rect x="313" y="497" width="6" height="8" fill="#5c5c5c"/><rect x="239" y="466" width="5" height="6" fill="#333"/><rect x="357" y="286" width="5" height="6" fill="#6a6a6a"/><rect x="264" y="257" width="10" height="12" fill="#333"/><rect x="138" y="505" width="5" height="6" fill="#5c5c5c"/><rect x="334" y="346" width="6" height="8" fill="#2c2c2c"/><rect x="149" y="522" width="8" height="10" fill="#5c5c5c"/><rect x="160" y="423" width="10" height="12" fill="#4a4a4a"/><rect x="392" y="264" width="8" height="10" fill="#333"/><rect x="358" y="179" width="8" height="10" fill="#4a4a4a"/><rect x="440" y="289" width="10" height="12" fill="#5c5c5c"/><rect x="251" y="369" width="6" height="8" fill="#2c2c2c"/><rect x="277" y="106" width="5" height="6" fill="#5c5c5c"/><rect x="375" y="399" width="6" height="8" fill="#2c2c2c"/><rect x="275" y="434" width="6" height="8" fill="#3c3c3c"/><rect x="365" y="180" width="8" height="10" fill="#5c5c5c"/><rect x="285" y="483" width="6" height="8" fill="#4a4a4a"/><rect x="209" y="266" width="10" height="12" fill="#6a6a6a"/><rect x="339" y="508" width="8" height="10" fill="#2c2c2c"/><rect x="459" y="488" width="6" height="8" fill="#333"/><rect x="278" y="431" width="5" height="6" fill="#333"/><rect x="314" y="447" width="10" height="12" fill="#5c5c5c"/><rect x="282" y="446" width="6" height="8" fill="#3c3c3c"/><rect x="349" y="485" width="6" height="8" fill="#4a4a4a"/><rect x="406" y="251" width="5" height="6" fill="#5c5c5c"/><rect x="297" y="84" width="6" height="8" fill="#6a6a6a"/><rect x="266" y="224" width="5" height="6" fill="#4a4a4a"/><rect x="409" y="164" width="6" height="8" fill="#2c2c2c"/><rect x="405" y="145" width="6" height="8" fill="#6a6a6a"/><rect x="447" y="368" width="8" height="10" fill="#333"/><rect x="325" y="469" width="6" height="8" fill="#333"/><rect x="306" y="233" width="10" height="12" fill="#2c2c2c"/><rect x="168" y="365" width="10" height="12" fill="#5c5c5c"/><rect x="224" y="287" width="10" height="12" fill="#4a4a4a"/><rect x="312" y="223" width="8" height="10" fill="#4a4a4a"/><rect x="262" y="129" width="5" height="6" fill="#6a6a6a"/><rect x="249" y="380" width="5" height="6" fill="#6a6a6a"/><rect x="454" y="383" width="10" height="12" fill="#3c3c3c"/><rect x="292" y="470" width="5" height="6" fill="#6a6a6a"/><rect x="409" y="300" width="6" height="8" fill="#333"/><rect x="293" y="262" width="8" height="10" fill="#6a6a6a"/><rect x="226" y="175" width="10" height="12" fill="#3c3c3c"/><rect x="366" y="252" width="6" height="8" fill="#4a4a4a"/><rect x="341" y="124" width="10" height="12" fill="#3c3c3c"/><rect x="429" y="430" width="6" height="8" fill="#2c2c2c"/><rect x="307" y="320" width="8" height="10" fill="#2c2c2c"/><rect x="263" y="374" width="6" height="8" fill="#6a6a6a"/><rect x="183" y="434" width="6" height="8" fill="#6a6a6a"/><rect x="188" y="382" width="10" height="12" fill="#4a4a4a"/><rect x="194" y="499" width="6" height="8" fill="#4a4a4a"/><rect x="226" y="248" width="6" height="8" fill="#4a4a4a"/><rect x="401" y="177" width="5" height="6" fill="#4a4a4a"/><rect x="312" y="478" width="6" height="8" fill="#333"/><rect x="344" y="533" width="5" height="6" fill="#4a4a4a"/><rect x="322" y="273" width="6" height="8" fill="#3c3c3c"/><rect x="373" y="436" width="6" height="8" fill="#6a6a6a"/><rect x="410" y="346" width="5" height="6" fill="#3c3c3c"/><rect x="395" y="424" width="10" height="12" fill="#333"/><rect x="183" y="558" width="6" height="8" fill="#2c2c2c"/><rect x="396" y="255" width="8" height="10" fill="#333"/><rect x="301" y="316" width="10" height="12" fill="#5c5c5c"/><rect x="426" y="169" width="8" height="10" fill="#5c5c5c"/><rect x="386" y="301" width="6" height="8" fill="#6a6a6a"/><rect x="169" y="364" width="5" height="6" fill="#5c5c5c"/><rect x="345" y="301" width="10" height="12" fill="#4a4a4a"/><rect x="411" y="214" width="5" height="6" fill="#2c2c2c"/><rect x="388" y="156" width="8" height="10" fill="#4a4a4a"/><rect x="369" y="515" width="6" height="8" fill="#333"/><rect x="408" y="240" width="5" height="6" fill="#3c3c3c"/><rect x="219" y="189" width="8" height="10" fill="#6a6a6a"/><rect x="301" y="356" width="6" height="8" fill="#2c2c2c"/><rect x="324" y="130" width="5" height="6" fill="#2c2c2c"/><rect x="196" y="324" width="10" height="12" fill="#3c3c3c"/><rect x="395" y="444" width="5" height="6" fill="#3c3c3c"/><rect x="204" y="225" width="6" height="8" fill="#6a6a6a"/><rect x="720" y="274" width="10" height="12" fill="#6a6a6a"/><rect x="681" y="395" width="10" height="12" fill="#6a6a6a"/><rect x="742" y="281" width="8" height="10" fill="#333"/><rect x="618" y="265" width="6" height="8" fill="#5c5c5c"/><rect x="716" y="310" width="6" height="8" fill="#6a6a6a"/><rect x="812" y="364" width="6" height="8" fill="#333"/><rect x="861" y="449" width="5" height="6" fill="#6a6a6a"/><rect x="676" y="307" width="6" height="8" fill="#3c3c3c"/><rect x="792" y="302" width="6" height="8" fill="#6a6a6a"/><rect x="671" y="117" width="5" height="6" fill="#5c5c5c"/><rect x="681" y="407" width="8" height="10" fill="#6a6a6a"/><rect x="609" y="362" width="8" height="10" fill="#5c5c5c"/><rect x="814" y="335" width="6" height="8" fill="#5c5c5c"/><rect x="816" y="384" width="6" height="8" fill="#5c5c5c"/><rect x="613" y="416" width="10" height="12" fill="#2c2c2c"/><rect x="740" y="389" width="6" height="8" fill="#4a4a4a"/><rect x="776" y="386" width="5" height="6" fill="#5c5c5c"/><rect x="608" y="69" width="5" height="6" fill="#3c3c3c"/><rect x="593" y="202" width="5" height="6" fill="#2c2c2c"/><rect x="569" y="179" width="6" height="8" fill="#333"/><rect x="695" y="166" width="6" height="8" fill="#333"/><rect x="801" y="497" width="5" height="6" fill="#3c3c3c"/><rect x="683" y="488" width="6" height="8" fill="#333"/><rect x="673" y="191" width="6" height="8" fill="#5c5c5c"/><rect x="566" y="496" width="10" height="12" fill="#5c5c5c"/><rect x="620" y="455" width="6" height="8" fill="#333"/><rect x="765" y="361" width="8" height="10" fill="#5c5c5c"/><rect x="536" y="99" width="10" height="12" fill="#6a6a6a"/><rect x="697" y="416" width="6" height="8" fill="#3c3c3c"/><rect x="535" y="167" width="10" height="12" fill="#3c3c3c"/><rect x="781" y="316" width="6" height="8" fill="#5c5c5c"/><rect x="766" y="227" width="5" height="6" fill="#5c5c5c"/><rect x="787" y="355" width="6" height="8" fill="#333"/><rect x="687" y="172" width="10" height="12" fill="#4a4a4a"/><rect x="737" y="475" width="10" height="12" fill="#5c5c5c"/><rect x="821" y="340" width="10" height="12" fill="#6a6a6a"/><rect x="575" y="102" width="8" height="10" fill="#5c5c5c"/><rect x="528" y="139" width="6" height="8" fill="#3c3c3c"/><rect x="764" y="479" width="5" height="6" fill="#6a6a6a"/><rect x="722" y="470" width="5" height="6" fill="#5c5c5c"/><rect x="801" y="397" width="6" height="8" fill="#2c2c2c"/><rect x="593" y="458" width="10" height="12" fill="#5c5c5c"/><rect x="772" y="315" width="10" height="12" fill="#2c2c2c"/><rect x="569" y="390" width="6" height="8" fill="#5c5c5c"/><rect x="586" y="279" width="6" height="8" fill="#5c5c5c"/><rect x="627" y="116" width="6" height="8" fill="#4a4a4a"/><rect x="583" y="244" width="10" height="12" fill="#4a4a4a"/><rect x="743" y="304" width="10" height="12" fill="#4a4a4a"/><rect x="767" y="462" width="5" height="6" fill="#333"/><rect x="591" y="126" width="8" height="10" fill="#6a6a6a"/><rect x="820" y="463" width="5" height="6" fill="#2c2c2c"/><rect x="872" y="525" width="8" height="10" fill="#5c5c5c"/><rect x="684" y="185" width="8" height="10" fill="#6a6a6a"/><rect x="866" y="482" width="6" height="8" fill="#2c2c2c"/><rect x="799" y="381" width="10" height="12" fill="#6a6a6a"/><rect x="576" y="163" width="6" height="8" fill="#4a4a4a"/><rect x="538" y="197" width="10" height="12" fill="#3c3c3c"/><rect x="721" y="322" width="5" height="6" fill="#4a4a4a"/><rect x="588" y="341" width="10" height="12" fill="#333"/><rect x="568" y="493" width="6" height="8" fill="#5c5c5c"/><rect x="628" y="95" width="6" height="8" fill="#333"/><rect x="535" y="129" width="8" height="10" fill="#2c2c2c"/><rect x="834" y="400" width="5" height="6" fill="#333"/><rect x="788" y="305" width="6" height="8" fill="#6a6a6a"/><rect x="550" y="462" width="6" height="8" fill="#6a6a6a"/><rect x="565" y="386" width="10" height="12" fill="#2c2c2c"/><rect x="623" y="233" width="8" height="10" fill="#6a6a6a"/><rect x="584" y="440" width="6" height="8" fill="#5c5c5c"/><rect x="561" y="105" width="6" height="8" fill="#4a4a4a"/><rect x="582" y="74" width="8" height="10" fill="#6a6a6a"/><rect x="677" y="461" width="6" height="8" fill="#333"/><rect x="587" y="133" width="8" height="10" fill="#333"/><rect x="637" y="272" width="5" height="6" fill="#2c2c2c"/><rect x="664" y="424" width="6" height="8" fill="#2c2c2c"/><rect x="609" y="154" width="6" height="8" fill="#2c2c2c"/><rect x="680" y="349" width="6" height="8" fill="#6a6a6a"/><rect x="637" y="210" width="5" height="6" fill="#6a6a6a"/><rect x="719" y="212" width="6" height="8" fill="#5c5c5c"/><rect x="748" y="326" width="10" height="12" fill="#2c2c2c"/><rect x="695" y="275" width="6" height="8" fill="#5c5c5c"/><rect x="685" y="440" width="6" height="8" fill="#6a6a6a"/><rect x="721" y="351" width="10" height="12" fill="#5c5c5c"/><rect x="572" y="448" width="6" height="8" fill="#6a6a6a"/><rect x="649" y="455" width="6" height="8" fill="#4a4a4a"/><rect x="579" y="344" width="5" height="6" fill="#333"/><rect x="518" y="150" width="6" height="8" fill="#5c5c5c"/><rect x="805" y="502" width="8" height="10" fill="#6a6a6a"/><rect x="740" y="479" width="5" height="6" fill="#4a4a4a"/><rect x="584" y="302" width="6" height="8" fill="#6a6a6a"/><rect x="658" y="355" width="6" height="8" fill="#5c5c5c"/><rect x="711" y="194" width="10" height="12" fill="#5c5c5c"/><rect x="791" y="470" width="8" height="10" fill="#333"/><rect x="743" y="303" width="8" height="10" fill="#6a6a6a"/><rect x="667" y="203" width="8" height="10" fill="#2c2c2c"/><rect x="667" y="284" width="10" height="12" fill="#3c3c3c"/><rect x="713" y="283" width="5" height="6" fill="#5c5c5c"/><rect x="750" y="283" width="8" height="10" fill="#6a6a6a"/><rect x="633" y="471" width="10" height="12" fill="#3c3c3c"/><rect x="721" y="401" width="6" height="8" fill="#3c3c3c"/><rect x="722" y="352" width="6" height="8" fill="#4a4a4a"/><rect x="763" y="277" width="5" height="6" fill="#3c3c3c"/><rect x="602" y="213" width="6" height="8" fill="#4a4a4a"/><rect x="647" y="364" width="5" height="6" fill="#5c5c5c"/><rect x="627" y="318" width="8" height="10" fill="#4a4a4a"/><rect x="757" y="423" width="10" height="12" fill="#4a4a4a"/>
<g stroke="#6d6d6d" fill="none" stroke-linecap="round"><path d="M470 372L340 398L262 446" stroke-width="13"/><path d="M445 352L370 336" stroke-width="9"/><path d="M410 300L385 345" stroke-width="7"/><path d="M300 380L240 370" stroke-width="6"/><path d="M350 200l10 50M330 230l40 -10" stroke-width="6" stroke="#4c4c4c"/></g>
<path d="M500 180C540 190 570 230 600 270C640 300 680 340 700 365L660 380C640 350 600 330 575 300C560 340 560 380 552 400L500 400Z" fill="#737373"/><path d="M566 292C600 310 630 330 650 352L628 350C605 335 585 320 566 312Z" fill="#0e0e0e"/><path d="M700 320L660 400M640 380L720 372" stroke="#666" stroke-width="9" fill="none"/><path d="M552 400C580 380 610 372 640 372L640 390C610 392 580 402 552 420Z" fill="#6a6a6a"/>
</g>
<path d="M420 6H500V140C490 200 470 300 490 420C500 470 520 500 530 540L500 470C470 420 450 330 444 250C442 180 430 120 420 60Z" fill="#787878" opacity=".75"/>
<path d="M505 440C512 470 520 500 532 540" stroke="#1a1a1a" stroke-width="7" fill="none"/>
<path d="M120 70C135 50 175 42 190 56C180 100 150 130 118 205C105 180 104 110 120 70Z" fill="#7c7c7c" stroke="#c4c4c4" stroke-width="7"/><path d="M130 90C140 110 130 150 122 190" stroke="#b0b0b0" stroke-width="5" fill="none"/>
<path d="M735 30C760 26 790 36 800 50C820 110 850 200 872 285C860 270 830 180 790 100C775 70 755 48 735 30Z" fill="#bdbdbd" stroke="#cfcfcf" stroke-width="3"/><path d="M760 34C800 90 840 190 866 280" stroke="#e0e0e0" stroke-width="4" fill="none"/>
<path d="M395 10C410 30 430 50 445 60M530 10C520 30 505 45 495 55" stroke="#b8b8b8" stroke-width="9" fill="none"/><path d="M300 25l60 10M560 25l70 12" stroke="#999" stroke-width="8" fill="none"/>
<ellipse cx="255" cy="105" rx="7" ry="17" transform="rotate(35 255 105)" fill="#b4b4b4" stroke="#dadada" stroke-width="4"/><ellipse cx="208" cy="190" rx="7" ry="17" transform="rotate(25 208 190)" fill="#b4b4b4" stroke="#dadada" stroke-width="4"/><ellipse cx="180" cy="245" rx="7" ry="17" transform="rotate(20 180 245)" fill="#b4b4b4" stroke="#dadada" stroke-width="4"/><ellipse cx="160" cy="310" rx="7" ry="17" transform="rotate(14 160 310)" fill="#b4b4b4" stroke="#dadada" stroke-width="4"/><ellipse cx="148" cy="375" rx="7" ry="17" transform="rotate(12 148 375)" fill="#b4b4b4" stroke="#dadada" stroke-width="4"/><ellipse cx="130" cy="445" rx="7" ry="17" transform="rotate(10 130 445)" fill="#b4b4b4" stroke="#dadada" stroke-width="4"/><ellipse cx="112" cy="540" rx="7" ry="17" transform="rotate(8 112 540)" fill="#b4b4b4" stroke="#dadada" stroke-width="4"/><ellipse cx="97" cy="655" rx="7" ry="17" transform="rotate(6 97 655)" fill="#b4b4b4" stroke="#dadada" stroke-width="4"/><ellipse cx="690" cy="90" rx="7" ry="17" transform="rotate(-40 690 90)" fill="#b4b4b4" stroke="#dadada" stroke-width="4"/><ellipse cx="740" cy="155" rx="7" ry="17" transform="rotate(-32 740 155)" fill="#b4b4b4" stroke="#dadada" stroke-width="4"/><ellipse cx="772" cy="215" rx="7" ry="17" transform="rotate(-25 772 215)" fill="#b4b4b4" stroke="#dadada" stroke-width="4"/><ellipse cx="797" cy="270" rx="7" ry="17" transform="rotate(-22 797 270)" fill="#b4b4b4" stroke="#dadada" stroke-width="4"/><ellipse cx="822" cy="325" rx="7" ry="17" transform="rotate(-18 822 325)" fill="#b4b4b4" stroke="#dadada" stroke-width="4"/><ellipse cx="850" cy="395" rx="7" ry="17" transform="rotate(-14 850 395)" fill="#b4b4b4" stroke="#dadada" stroke-width="4"/><ellipse cx="872" cy="480" rx="7" ry="17" transform="rotate(-12 872 480)" fill="#b4b4b4" stroke="#dadada" stroke-width="4"/><ellipse cx="910" cy="605" rx="7" ry="17" transform="rotate(-8 910 605)" fill="#b4b4b4" stroke="#dadada" stroke-width="4"/></symbol></defs></svg>
<div class="tab" style="left:300px;width:96px"></div><div class="abs" style="left:301px;top:126px;width:95px;height:1px;background:#e9b9bf"></div><svg class="abs" style="left:305px;top:104px" width="16" height="16" viewBox="0 0 16 16"><path d="M0 0H6.500V6.500H0ZM8.500 0H16L8.500 7ZM0 8.500H6L0 15ZM16 2.500V16H2.500Z" fill="#0645b4"/></svg><div class="t" style="left:331.5px;top:104.5px;font-size:13px;letter-spacing:-0.38px">Display</div><svg class="abs" style="left:378px;top:107px" width="13" height="13" viewBox="0 0 13 13"><path d="M2 2L11 11M11 2L2 11" stroke="#0645b4" stroke-width="3.700" stroke-linecap="butt"/></svg><div class="abs" style="left:299px;top:127px;width:572px;height:628px;border:2px solid rgba(240,243,250,.8);border-radius:2px"></div><div class="abs" style="left:553px;top:439px;width:8px;height:4px;border-left:1px solid #ddd;border-right:1px solid #ddd"><div style="margin:0 auto;width:1px;height:4px;background:#ddd"></div></div><div class="abs" style="left:555px;top:595px;width:4px;height:7px;border-top:1px solid #e6e6ea;border-bottom:1px solid #e6e6ea"><div style="margin-top:2px;height:1px;background:#e6e6ea"></div></div><div class="abs" style="left:302px;top:129px;width:252px;height:309px;background:#000;border:2px solid #c40000;border-left-width:3px;overflow:hidden"><svg class="abs" style="left:0;top:0" width="247" height="305" viewBox="0 0 247 305"><g transform="translate(6 0)"><path d="M60 60C40 78 20 105 14 127C10 145 10 160 15 172C20 184 32 190 60 210L60 222C30 204 14 192 8 176C2 160 3 142 8 124C14 100 34 72 60 50Z" fill="#6a6a6a"/><path d="M60 66C44 82 26 108 21 128C17 146 18 158 22 168C27 180 40 186 60 200" fill="none" stroke="#2a2a2a" stroke-width="3"/><path d="M31.400 126C31 134 32 142 33.500 148" stroke="#c8c8c8" stroke-width="1.400" fill="none"/><path d="M24 110C20 124 19 140 21 154" stroke="#9a9a9a" stroke-width="1" fill="none"/></g><path d="M-1 196C14 202 28 210 60 232M-1 212C14 218 28 228 60 254M-1 232C14 238 28 250 60 280M-1 180C8 184 14 188 20 194" fill="none" stroke="#454545" stroke-width="1.200"/><path d="M0 153H247" stroke="#1a6fe0" stroke-width="1"/></svg><div class="t" style="left:1px;top:288px;font-size:13px;color:#d40000;letter-spacing:-0.24px">Axial</div></div><div class="abs" style="left:560px;top:129px;width:252px;height:309px;background:#000;border:2px solid #00a000;border-left-width:3px;overflow:hidden"><div class="t" style="left:1.5px;top:288px;font-size:13px;color:#00a800;letter-spacing:-0.17px">Sagittal</div></div><div class="abs" style="left:302px;top:444px;width:252px;height:308px;background:#000;border:2px solid #0a7cf5;border-left-width:3px;overflow:hidden"><svg class="abs" style="left:-1px;top:55px" width="248" height="193"><use href="#s-ct" width="248" height="193"/></svg><div class="abs" style="left:0;top:152px;width:247px;height:1px;background:#c81414"></div><div class="abs" style="left:122px;top:55px;width:1px;height:193px;background:#0f9a0f"></div><svg class="abs" style="left:78px;top:135px" width="14" height="16" viewBox="0 0 14 16"><ellipse cx="6.800" cy="7.600" rx="3.300" ry="4.200" transform="rotate(25 6.8 7.6)" fill="none" stroke="#fff" stroke-width="1.600"/></svg><div class="abs" style="left:148px;top:81px;width:5px;height:4px;background:#f2e600;transform:skewX(-25deg)"></div><div class="t" style="left:0.5px;top:287px;font-size:13px;color:#1a86ff;letter-spacing:0.28px">Coronal</div></div><div class="abs" style="left:560px;top:444px;width:252px;height:308px;background:linear-gradient(180deg,#1b1b1b,#4c4c4c 55%,#7b7b7b);border:2px solid #f6f600;border-left-width:3px;overflow:hidden"><div class="abs" style="left:45.500px;top:94.500px;width:153px;height:117px;border:1px solid #1668d6"><svg class="abs" style="left:0;top:0" width="151" height="115"><use href="#s-ct" width="151" height="115"/></svg></div><svg class="abs" style="left:30px;top:80px" width="190" height="145" viewBox="0 0 190 145"><path d="M50 54L62 50.500C70 49 80 50 92 52.500L98 53V59L92 58.500C86 58 82 58 78 60C74 63 72 67 69 70.500L65 68C68 63 70 59 74 57C68 55.800 62 55.800 50 54.800Z" fill="#dedede"/><g stroke="#e4e4e4" fill="none" stroke-linecap="round" stroke-width="1.100"><path d="M65.700 41.500L69.700 50.500M78.800 40.500L77.800 49M60 45l6 6M72 44l1 6M83 43l-2 7M58 60l8 -3M62 64l6 -5M66 58l-6 6"/></g><rect x="97.500" y="52.500" width="5.500" height="7" fill="#c4c4c4"/><g stroke="#f0dc10" stroke-width="1.200" fill="none"><path d="M109 42.500L108 29.500M109 42.500L114 31.500M109 42.500L102.500 35M109 42.500L117 37.500M111 36l1 -6"/></g><path d="M4 72.500H181" stroke="#b30f0f" stroke-width="1.200"/><path d="M92.500 5.500V140" stroke="#0f8f0f" stroke-width="1.200"/></svg><div class="t" style="left:1px;top:287px;font-size:13px;color:#e8e800;letter-spacing:-1.06px">3D</div></div><div class="abs" style="left:817px;top:129px;width:50px;height:569px;background:#f0efed"></div><div class="abs" style="left:819px;top:191px;width:18px;height:418px;background:#2d8fc8;border-left:1px solid #2a6f98;border-right:1px solid #2a6f98;border-bottom:2px solid #23303a"></div><div class="abs" style="left:825px;top:665.5px;width:6px;height:1px;background:#262626"></div><div class="abs" style="left:825px;top:651.0px;width:6px;height:1px;background:#262626"></div><div class="abs" style="left:825px;top:636.5px;width:6px;height:1px;background:#262626"></div><div class="abs" style="left:825px;top:622.0px;width:6px;height:1px;background:#262626"></div><div class="abs" style="left:822px;top:607.5px;width:12px;height:1px;background:#262626"></div><div class="t" style="left:838px;top:601.5px;font-size:9px;color:#555;line-height:12px;height:12px;letter-spacing:-0.41px">-1000</div><div class="abs" style="left:825px;top:593.0px;width:6px;height:1px;background:#262626"></div><div class="abs" style="left:825px;top:578.5px;width:6px;height:1px;background:#262626"></div><div class="abs" style="left:825px;top:564.0px;width:6px;height:1px;background:#262626"></div><div class="abs" style="left:825px;top:549.5px;width:6px;height:1px;background:#262626"></div><div class="abs" style="left:822px;top:535.0px;width:12px;height:1px;background:#262626"></div><div class="t" style="left:838px;top:529.0px;font-size:9px;color:#555;line-height:12px;height:12px;letter-spacing:-0.50px">-500</div><div class="abs" style="left:825px;top:520.5px;width:6px;height:1px;background:#262626"></div><div class="abs" style="left:825px;top:506.0px;width:6px;height:1px;background:#262626"></div><div class="abs" style="left:825px;top:491.5px;width:6px;height:1px;background:#262626"></div><div class="abs" style="left:825px;top:477.0px;width:6px;height:1px;background:#262626"></div><div class="abs" style="left:822px;top:462.5px;width:12px;height:1px;background:#262626"></div><div class="t" style="left:840.5px;top:456.5px;font-size:9px;color:#555;line-height:12px;height:12px;">0</div><div class="abs" style="left:825px;top:448.0px;width:6px;height:1px;background:#262626"></div><div class="abs" style="left:825px;top:433.5px;width:6px;height:1px;background:#262626"></div><div class="abs" style="left:825px;top:419.0px;width:6px;height:1px;background:#262626"></div><div class="abs" style="left:825px;top:404.5px;width:6px;height:1px;background:#262626"></div><div class="abs" style="left:822px;top:390.0px;width:12px;height:1px;background:#262626"></div><div class="t" style="left:840.5px;top:384.0px;font-size:9px;color:#555;line-height:12px;height:12px;letter-spacing:-0.78px">500</div><div class="abs" style="left:825px;top:375.5px;width:6px;height:1px;background:#262626"></div><div class="abs" style="left:825px;top:361.0px;width:6px;height:1px;background:#262626"></div><div class="abs" style="left:825px;top:346.5px;width:6px;height:1px;background:#262626"></div><div class="abs" style="left:825px;top:332.0px;width:6px;height:1px;background:#262626"></div><div class="abs" style="left:822px;top:317.5px;width:12px;height:1px;background:#262626"></div><div class="t" style="left:840.5px;top:311.5px;font-size:9px;color:#555;line-height:12px;height:12px;letter-spacing:-1.01px">1000</div><div class="abs" style="left:825px;top:303.0px;width:6px;height:1px;background:#262626"></div><div class="abs" style="left:825px;top:288.5px;width:6px;height:1px;background:#262626"></div><div class="abs" style="left:825px;top:274.0px;width:6px;height:1px;background:#262626"></div><div class="abs" style="left:825px;top:259.5px;width:6px;height:1px;background:#262626"></div><div class="abs" style="left:822px;top:245.0px;width:12px;height:1px;background:#262626"></div><div class="t" style="left:840.5px;top:239.0px;font-size:9px;color:#555;line-height:12px;height:12px;letter-spacing:-1.01px">1500</div><div class="abs" style="left:825px;top:230.5px;width:6px;height:1px;background:#262626"></div><div class="abs" style="left:825px;top:216.0px;width:6px;height:1px;background:#262626"></div><div class="abs" style="left:825px;top:201.5px;width:6px;height:1px;background:#262626"></div><div class="abs" style="left:825px;top:187.0px;width:6px;height:1px;background:#262626"></div><div class="abs" style="left:822px;top:172.5px;width:12px;height:1px;background:#262626"></div><div class="t" style="left:840.5px;top:166.5px;font-size:9px;color:#555;line-height:12px;height:12px;letter-spacing:-1.01px">2000</div><div class="abs" style="left:825px;top:158.0px;width:6px;height:1px;background:#262626"></div><div class="abs" style="left:825px;top:143.5px;width:6px;height:1px;background:#262626"></div><div class="abs" style="left:818px;top:699px;width:48px;height:24px;background:#fff;border:1px solid #aaa39b;border-radius:4px"></div><div class="abs" style="left:818px;top:726px;width:48px;height:25px;background:#fff;border:1px solid #aaa39b;border-radius:4px"></div><div class="t" style="left:821px;top:703.5px;font-size:13px;letter-spacing:-0.90px">421</div><div class="t" style="left:821px;top:731px;font-size:13px;letter-spacing:-0.48px">2888</div>
<!-- SV Modeling -->
<div class="abs" style="left:873px;top:100px;width:125px;height:29px;background:#e5f0fd;border:2px solid #ee6f3a;border-bottom:none;border-radius:7px 7px 0 0"></div><div class="abs" style="left:873px;top:127px;width:577px;height:628px;background:#e5f0fd;border:2px solid #ee6f3a;border-radius:0 2px 2px 2px"></div><svg class="abs" style="left:879px;top:105px" width="15" height="16"><use href="#s-model"/></svg><div class="t" style="left:904.5px;top:106px;font-size:13px;letter-spacing:-0.52px">SV Modeling</div><svg class="abs" style="left:980px;top:107px" width="13" height="13" viewBox="0 0 13 13"><path d="M2 2L11 11M11 2L2 11" stroke="#0645b4" stroke-width="3.700" stroke-linecap="butt"/></svg><div class="t" style="left:880.5px;top:140.5px;letter-spacing:-0.03px">Model Name:</div><div class="t" style="left:964.5px;top:140.5px;letter-spacing:-0.44px">m1</div><div class="t" style="left:880.5px;top:167.5px;letter-spacing:-0.08px">Model Type:</div><div class="t" style="left:964.5px;top:167.5px;letter-spacing:-0.12px">Parasolid</div><div class="btn" style="left:1337px;top:136.500px;width:104px;height:24px"></div><div class="t" style="left:1345px;top:140.5px;letter-spacing:-0.06px">Create Model ...</div><div class="abs" style="left:880px;top:189px;width:562px;height:2px;background:#333"></div><div class="btn" style="left:881px;top:198.500px;width:277px;height:24px"></div><div class="t" style="left:964.5px;top:202.5px;letter-spacing:-0.34px">Change Facet Size...</div><div class="btn" style="left:1165px;top:198.500px;width:276px;height:24px"></div><div class="t" style="left:1242.5px;top:202.5px;letter-spacing:-0.06px">Convert to PolyData...</div><div class="abs" style="left:880px;top:258px;width:562px;height:492px;border:1px solid #c4c0ba;border-radius:2px;background:#f1f0ee"></div><div class="abs" style="left:942px;top:232.500px;width:49px;height:26px;border:1px solid #c0bcb6;border-bottom:none;border-radius:4px 4px 0 0;background:linear-gradient(180deg,#f1f0ee,#dedcda)"></div><div class="abs" style="left:880px;top:229px;width:63px;height:30px;border:1px solid #c0bcb6;border-bottom:none;border-radius:5px 5px 0 0;background:linear-gradient(180deg,#fcfcfb,#f2f1ef)"></div><div class="t" style="left:887.5px;top:236.5px;letter-spacing:-0.36px">Face List</div><div class="t" style="left:950.5px;top:238px;letter-spacing:0.10px">Blend</div><div class="abs" style="left:883px;top:265.5px;width:544px;height:478px;background:#fff;border:1px solid #c9c5bf;overflow:hidden"></div><div class="abs" style="left:884px;top:266.0px;width:542px;height:25px;background:linear-gradient(180deg,#fbfbfa,#eceae8);border-bottom:1px solid #c9c5bf"></div><div class="abs" style="left:1177px;top:266.0px;width:250px;height:25px;background:linear-gradient(180deg,#f6f5f4,#eeedeb)"></div><div class="t" style="left:938.5px;top:270.5px;font-size:13px;color:#2e2e2e;font-weight:bold;letter-spacing:-0.48px">Name</div><div class="t" style="left:1022.5px;top:270.5px;font-size:13px;color:#2e2e2e;font-weight:bold;letter-spacing:-0.97px">Type</div><div class="t" style="left:1073.5px;top:270.5px;font-size:13px;color:#2e2e2e;font-weight:bold;">V</div><div class="t" style="left:1100px;top:270.5px;font-size:13px;color:#2e2e2e;font-weight:bold;">C</div><div class="t" style="left:1142.5px;top:270.5px;font-size:13px;color:#2e2e2e;font-weight:bold;">O</div><div class="abs" style="left:884px;top:291px;width:21px;height:30px;background:linear-gradient(180deg,#fafaf9,#eeedeb)"></div><div class="abs" style="left:884px;top:320px;width:293px;height:1px;z-index:2;background:#cbc8c3"></div><div class="t" style="left:887.5px;top:298.5px;font-size:13px;color:#333;">1</div><div class="t" style="left:908.5px;top:298px;color:#2e2e2e;letter-spacing:-0.58px">LPA_01_02_01...</div><div class="t" style="left:1008.5px;top:298px;color:#2e2e2e;letter-spacing:-0.39px">cap</div><div class="t" style="left:1120.5px;top:298px;color:#2e2e2e;">1</div><svg class="abs" style="left:1070px;top:301px" width="13" height="10" viewBox="0 0 13 10"><path d="M0.500 5.500C3 2 10 2 12.500 5.500C10 8.800 3 8.800 0.500 5.500Z" fill="#fff" stroke="#222" stroke-width=".8"/><ellipse cx="6.500" cy="5.500" rx="3.300" ry="2.700" fill="#222"/><path d="M2.500 2.800l-1-1.500M4.500 2l-.5-1.600M6.500 1.700v-1.500M8.500 2l.5-1.600M10.500 2.800l1-1.500M3 8.300l-.8 1.200M5 8.900l-.4 1.100M6.500 9.100v1M8 8.900l.4 1.100M10 8.300l.8 1.200" stroke="#222" stroke-width=".7"/></svg><div class="abs" style="left:884px;top:321px;width:21px;height:30px;background:linear-gradient(180deg,#fafaf9,#eeedeb)"></div><div class="abs" style="left:884px;top:350px;width:293px;height:1px;z-index:2;background:#cbc8c3"></div><div class="t" style="left:887.5px;top:328.5px;font-size:13px;color:#333;">2</div><div class="t" style="left:908.5px;top:328px;color:#2e2e2e;letter-spacing:-0.49px">wall_LPA_01_0...</div><div class="t" style="left:1008.5px;top:328px;color:#2e2e2e;letter-spacing:-0.01px">wall</div><div class="t" style="left:1120.5px;top:328px;color:#2e2e2e;">1</div><svg class="abs" style="left:1070px;top:331px" width="13" height="10" viewBox="0 0 13 10"><path d="M0.500 5.500C3 2 10 2 12.500 5.500C10 8.800 3 8.800 0.500 5.500Z" fill="#fff" stroke="#222" stroke-width=".8"/><ellipse cx="6.500" cy="5.500" rx="3.300" ry="2.700" fill="#222"/><path d="M2.500 2.800l-1-1.500M4.500 2l-.5-1.600M6.500 1.700v-1.500M8.500 2l.5-1.600M10.500 2.800l1-1.500M3 8.300l-.8 1.200M5 8.900l-.4 1.100M6.500 9.100v1M8 8.900l.4 1.100M10 8.300l.8 1.200" stroke="#222" stroke-width=".7"/></svg><div class="abs" style="left:905px;top:351px;width:272px;height:30px;background:#e4e3e2"></div><div class="abs" style="left:905px;top:351px;width:100px;height:30px;background:linear-gradient(180deg,#e9e8e7,#dddcdb)"></div><div class="abs" style="left:884px;top:351px;width:21px;height:30px;background:linear-gradient(180deg,#fafaf9,#eeedeb)"></div><div class="abs" style="left:884px;top:380px;width:293px;height:1px;z-index:2;background:#cbc8c3"></div><div class="t" style="left:887.5px;top:358.5px;font-size:13px;color:#333;font-weight:bold;">3</div><div class="t" style="left:908.5px;top:358px;color:#2e2e2e;letter-spacing:-0.73px">LPA_01_02_01</div><div class="t" style="left:1008.5px;top:358px;color:#2e2e2e;letter-spacing:-0.39px">cap</div><div class="t" style="left:1120.5px;top:358px;color:#2e2e2e;">1</div><svg class="abs" style="left:1070px;top:361px" width="13" height="10" viewBox="0 0 13 10"><path d="M0.500 5.500C3 2 10 2 12.500 5.500C10 8.800 3 8.800 0.500 5.500Z" fill="#fff" stroke="#8a4a3a" stroke-width=".8"/><ellipse cx="6.500" cy="5.500" rx="3.300" ry="2.700" fill="#8a4a3a"/><path d="M2.500 2.800l-1-1.500M4.500 2l-.5-1.600M6.500 1.700v-1.500M8.500 2l.5-1.600M10.500 2.800l1-1.500M3 8.300l-.8 1.200M5 8.900l-.4 1.100M6.500 9.100v1M8 8.900l.4 1.100M10 8.300l.8 1.200" stroke="#8a4a3a" stroke-width=".7"/></svg><div class="abs" style="left:905px;top:381px;width:272px;height:30px;background:#e4e3e2"></div><div class="abs" style="left:905px;top:381px;width:100px;height:30px;background:linear-gradient(180deg,#e9e8e7,#dddcdb)"></div><div class="abs" style="left:884px;top:381px;width:21px;height:30px;background:linear-gradient(180deg,#fafaf9,#eeedeb)"></div><div class="abs" style="left:884px;top:410px;width:293px;height:1px;z-index:2;background:#cbc8c3"></div><div class="t" style="left:887.5px;top:388.5px;font-size:13px;color:#333;font-weight:bold;">4</div><div class="t" style="left:908.5px;top:388px;color:#2e2e2e;letter-spacing:-0.49px">wall_LPA_01_0...</div><div class="t" style="left:1008.5px;top:388px;color:#2e2e2e;letter-spacing:-0.01px">wall</div><div class="t" style="left:1120.5px;top:388px;color:#2e2e2e;">1</div><svg class="abs" style="left:1070px;top:391px" width="13" height="10" viewBox="0 0 13 10"><path d="M0.500 5.500C3 2 10 2 12.500 5.500C10 8.800 3 8.800 0.500 5.500Z" fill="#fff" stroke="#8a4a3a" stroke-width=".8"/><ellipse cx="6.500" cy="5.500" rx="3.300" ry="2.700" fill="#8a4a3a"/><path d="M2.500 2.800l-1-1.500M4.500 2l-.5-1.600M6.500 1.700v-1.500M8.500 2l.5-1.600M10.500 2.800l1-1.500M3 8.300l-.8 1.200M5 8.900l-.4 1.100M6.500 9.100v1M8 8.900l.4 1.100M10 8.300l.8 1.200" stroke="#8a4a3a" stroke-width=".7"/></svg><div class="abs" style="left:905px;top:411px;width:272px;height:30px;background:#e4e3e2"></div><div class="abs" style="left:905px;top:411px;width:100px;height:30px;background:linear-gradient(180deg,#e9e8e7,#dddcdb)"></div><div class="abs" style="left:884px;top:411px;width:21px;height:30px;background:linear-gradient(180deg,#fafaf9,#eeedeb)"></div><div class="abs" style="left:884px;top:440px;width:293px;height:1px;z-index:2;background:#cbc8c3"></div><div class="t" style="left:887.5px;top:418.5px;font-size:13px;color:#333;font-weight:bold;">5</div><div class="t" style="left:908.5px;top:418px;color:#2e2e2e;letter-spacing:-0.66px">LPA_01_02</div><div class="t" style="left:1008.5px;top:418px;color:#2e2e2e;letter-spacing:-0.39px">cap</div><div class="t" style="left:1120.5px;top:418px;color:#2e2e2e;">1</div><svg class="abs" style="left:1070px;top:421px" width="13" height="10" viewBox="0 0 13 10"><path d="M0.500 5.500C3 2 10 2 12.500 5.500C10 8.800 3 8.800 0.500 5.500Z" fill="#fff" stroke="#8a4a3a" stroke-width=".8"/><ellipse cx="6.500" cy="5.500" rx="3.300" ry="2.700" fill="#8a4a3a"/><path d="M2.500 2.800l-1-1.500M4.500 2l-.5-1.600M6.500 1.700v-1.500M8.500 2l.5-1.600M10.500 2.800l1-1.500M3 8.300l-.8 1.200M5 8.900l-.4 1.100M6.500 9.100v1M8 8.900l.4 1.100M10 8.300l.8 1.200" stroke="#8a4a3a" stroke-width=".7"/></svg><div class="abs" style="left:905px;top:441px;width:272px;height:30px;background:#e4e3e2"></div><div class="abs" style="left:905px;top:441px;width:100px;height:30px;background:linear-gradient(180deg,#e9e8e7,#dddcdb)"></div><div class="abs" style="left:884px;top:441px;width:21px;height:30px;background:linear-gradient(180deg,#fafaf9,#eeedeb)"></div><div class="abs" style="left:884px;top:470px;width:293px;height:1px;z-index:2;background:#cbc8c3"></div><div class="t" style="left:887.5px;top:448.5px;font-size:13px;color:#333;font-weight:bold;">6</div><div class="t" style="left:908.5px;top:448px;color:#2e2e2e;letter-spacing:-0.71px">LPA_01_02_2</div><div class="t" style="left:1008.5px;top:448px;color:#2e2e2e;letter-spacing:-0.39px">cap</div><div class="t" style="left:1120.5px;top:448px;color:#2e2e2e;">1</div><svg class="abs" style="left:1070px;top:451px" width="13" height="10" viewBox="0 0 13 10"><path d="M0.500 5.500C3 2 10 2 12.500 5.500C10 8.800 3 8.800 0.500 5.500Z" fill="#fff" stroke="#8a4a3a" stroke-width=".8"/><ellipse cx="6.500" cy="5.500" rx="3.300" ry="2.700" fill="#8a4a3a"/><path d="M2.500 2.800l-1-1.500M4.500 2l-.5-1.600M6.500 1.700v-1.500M8.500 2l.5-1.600M10.500 2.800l1-1.500M3 8.300l-.8 1.200M5 8.900l-.4 1.100M6.500 9.100v1M8 8.900l.4 1.100M10 8.300l.8 1.200" stroke="#8a4a3a" stroke-width=".7"/></svg><div class="abs" style="left:905px;top:471px;width:272px;height:30px;background:#e4e3e2"></div><div class="abs" style="left:905px;top:471px;width:100px;height:30px;background:linear-gradient(180deg,#e9e8e7,#dddcdb)"></div><div class="abs" style="left:884px;top:471px;width:21px;height:30px;background:linear-gradient(180deg,#fafaf9,#eeedeb)"></div><div class="abs" style="left:884px;top:500px;width:293px;height:1px;z-index:2;background:#cbc8c3"></div><div class="t" style="left:887.5px;top:478.5px;font-size:13px;color:#333;font-weight:bold;">7</div><div class="t" style="left:908.5px;top:478px;color:#2e2e2e;letter-spacing:-0.49px">wall_LPA_01_02</div><div class="t" style="left:1008.5px;top:478px;color:#2e2e2e;letter-spacing:-0.01px">wall</div><div class="t" style="left:1120.5px;top:478px;color:#2e2e2e;">1</div><svg class="abs" style="left:1070px;top:481px" width="13" height="10" viewBox="0 0 13 10"><path d="M0.500 5.500C3 2 10 2 12.500 5.500C10 8.800 3 8.800 0.500 5.500Z" fill="#fff" stroke="#8a4a3a" stroke-width=".8"/><ellipse cx="6.500" cy="5.500" rx="3.300" ry="2.700" fill="#8a4a3a"/><path d="M2.500 2.800l-1-1.500M4.500 2l-.5-1.600M6.500 1.700v-1.500M8.500 2l.5-1.600M10.500 2.800l1-1.500M3 8.300l-.8 1.200M5 8.900l-.4 1.100M6.500 9.100v1M8 8.900l.4 1.100M10 8.300l.8 1.200" stroke="#8a4a3a" stroke-width=".7"/></svg><div class="abs" style="left:905px;top:501px;width:272px;height:30px;background:#e4e3e2"></div><div class="abs" style="left:905px;top:501px;width:100px;height:30px;background:linear-gradient(180deg,#e9e8e7,#dddcdb)"></div><div class="abs" style="left:884px;top:501px;width:21px;height:30px;background:linear-gradient(180deg,#fafaf9,#eeedeb)"></div><div class="abs" style="left:884px;top:530px;width:293px;height:1px;z-index:2;background:#cbc8c3"></div><div class="t" style="left:887.5px;top:508.5px;font-size:13px;color:#333;font-weight:bold;">8</div><div class="t" style="left:908.5px;top:508px;color:#2e2e2e;letter-spacing:-0.65px">LPA_01_01_05</div><div class="t" style="left:1008.5px;top:508px;color:#2e2e2e;letter-spacing:-0.39px">cap</div><div class="t" style="left:1120.5px;top:508px;color:#2e2e2e;">1</div><svg class="abs" style="left:1070px;top:511px" width="13" height="10" viewBox="0 0 13 10"><path d="M0.500 5.500C3 2 10 2 12.500 5.500C10 8.800 3 8.800 0.500 5.500Z" fill="#fff" stroke="#8a4a3a" stroke-width=".8"/><ellipse cx="6.500" cy="5.500" rx="3.300" ry="2.700" fill="#8a4a3a"/><path d="M2.500 2.800l-1-1.500M4.500 2l-.5-1.600M6.500 1.700v-1.500M8.500 2l.5-1.600M10.500 2.800l1-1.500M3 8.300l-.8 1.200M5 8.900l-.4 1.100M6.500 9.100v1M8 8.900l.4 1.100M10 8.300l.8 1.200" stroke="#8a4a3a" stroke-width=".7"/></svg><div class="abs" style="left:905px;top:531px;width:272px;height:30px;background:#e4e3e2"></div><div class="abs" style="left:905px;top:531px;width:100px;height:30px;background:linear-gradient(180deg,#e9e8e7,#dddcdb)"></div><div class="abs" style="left:884px;top:531px;width:21px;height:30px;background:linear-gradient(180deg,#fafaf9,#eeedeb)"></div><div class="abs" style="left:884px;top:560px;width:293px;height:1px;z-index:2;background:#cbc8c3"></div><div class="t" style="left:887.5px;top:538.5px;font-size:13px;color:#333;font-weight:bold;">9</div><div class="t" style="left:908.5px;top:538px;color:#2e2e2e;letter-spacing:-0.66px">LPA_01_01_05_2</div><div class="t" style="left:1008.5px;top:538px;color:#2e2e2e;letter-spacing:-0.39px">cap</div><div class="t" style="left:1120.5px;top:538px;color:#2e2e2e;">1</div><svg class="abs" style="left:1070px;top:541px" width="13" height="10" viewBox="0 0 13 10"><path d="M0.500 5.500C3 2 10 2 12.500 5.500C10 8.800 3 8.800 0.500 5.500Z" fill="#fff" stroke="#8a4a3a" stroke-width=".8"/><ellipse cx="6.500" cy="5.500" rx="3.300" ry="2.700" fill="#8a4a3a"/><path d="M2.500 2.800l-1-1.500M4.500 2l-.5-1.600M6.500 1.700v-1.500M8.500 2l.5-1.600M10.500 2.800l1-1.500M3 8.300l-.8 1.200M5 8.900l-.4 1.100M6.500 9.100v1M8 8.900l.4 1.100M10 8.300l.8 1.200" stroke="#8a4a3a" stroke-width=".7"/></svg><div class="abs" style="left:884px;top:561px;width:21px;height:30px;background:linear-gradient(180deg,#fafaf9,#eeedeb)"></div><div class="abs" style="left:884px;top:590px;width:293px;height:1px;z-index:2;background:#cbc8c3"></div><div class="t" style="left:887px;top:568.5px;font-size:13px;color:#333;letter-spacing:-0.98px">10</div><div class="t" style="left:908.5px;top:568px;color:#2e2e2e;letter-spacing:-0.49px">wall_LPA_01_0...</div><div class="t" style="left:1008.5px;top:568px;color:#2e2e2e;letter-spacing:-0.01px">wall</div><div class="t" style="left:1120.5px;top:568px;color:#2e2e2e;">1</div><svg class="abs" style="left:1070px;top:571px" width="13" height="10" viewBox="0 0 13 10"><path d="M0.500 5.500C3 2 10 2 12.500 5.500C10 8.800 3 8.800 0.500 5.500Z" fill="#fff" stroke="#222" stroke-width=".8"/><ellipse cx="6.500" cy="5.500" rx="3.300" ry="2.700" fill="#222"/><path d="M2.500 2.800l-1-1.500M4.500 2l-.5-1.600M6.500 1.700v-1.500M8.500 2l.5-1.600M10.500 2.800l1-1.500M3 8.300l-.8 1.200M5 8.900l-.4 1.100M6.500 9.100v1M8 8.900l.4 1.100M10 8.300l.8 1.200" stroke="#222" stroke-width=".7"/></svg><div class="abs" style="left:884px;top:591px;width:21px;height:30px;background:linear-gradient(180deg,#fafaf9,#eeedeb)"></div><div class="abs" style="left:884px;top:620px;width:293px;height:1px;z-index:2;background:#cbc8c3"></div><div class="t" style="left:887px;top:598.5px;font-size:13px;color:#333;letter-spacing:-0.50px">11</div><div class="t" style="left:908.5px;top:598px;color:#2e2e2e;letter-spacing:-0.55px">LPA_01_01_04...</div><div class="t" style="left:1008.5px;top:598px;color:#2e2e2e;letter-spacing:-0.39px">cap</div><div class="t" style="left:1120.5px;top:598px;color:#2e2e2e;">1</div><svg class="abs" style="left:1070px;top:601px" width="13" height="10" viewBox="0 0 13 10"><path d="M0.500 5.500C3 2 10 2 12.500 5.500C10 8.800 3 8.800 0.500 5.500Z" fill="#fff" stroke="#222" stroke-width=".8"/><ellipse cx="6.500" cy="5.500" rx="3.300" ry="2.700" fill="#222"/><path d="M2.500 2.800l-1-1.500M4.500 2l-.5-1.600M6.500 1.700v-1.500M8.500 2l.5-1.600M10.500 2.800l1-1.500M3 8.300l-.8 1.200M5 8.900l-.4 1.100M6.500 9.100v1M8 8.900l.4 1.100M10 8.300l.8 1.200" stroke="#222" stroke-width=".7"/></svg><div class="abs" style="left:884px;top:621px;width:21px;height:30px;background:linear-gradient(180deg,#fafaf9,#eeedeb)"></div><div class="abs" style="left:884px;top:650px;width:293px;height:1px;z-index:2;background:#cbc8c3"></div><div class="t" style="left:887px;top:628.5px;font-size:13px;color:#333;letter-spacing:-0.98px">12</div><div class="t" style="left:908.5px;top:628px;color:#2e2e2e;letter-spacing:-0.49px">wall_LPA_01_0...</div><div class="t" style="left:1008.5px;top:628px;color:#2e2e2e;letter-spacing:-0.01px">wall</div><div class="t" style="left:1120.5px;top:628px;color:#2e2e2e;">1</div><svg class="abs" style="left:1070px;top:631px" width="13" height="10" viewBox="0 0 13 10"><path d="M0.500 5.500C3 2 10 2 12.500 5.500C10 8.800 3 8.800 0.500 5.500Z" fill="#fff" stroke="#222" stroke-width=".8"/><ellipse cx="6.500" cy="5.500" rx="3.300" ry="2.700" fill="#222"/><path d="M2.500 2.800l-1-1.500M4.500 2l-.5-1.600M6.500 1.700v-1.500M8.500 2l.5-1.600M10.500 2.800l1-1.500M3 8.300l-.8 1.200M5 8.900l-.4 1.100M6.500 9.100v1M8 8.900l.4 1.100M10 8.300l.8 1.200" stroke="#222" stroke-width=".7"/></svg><div class="abs" style="left:905px;top:651px;width:272px;height:30px;background:#e4e3e2"></div><div class="abs" style="left:905px;top:651px;width:100px;height:30px;background:linear-gradient(180deg,#e9e8e7,#dddcdb)"></div><div class="abs" style="left:884px;top:651px;width:21px;height:30px;background:linear-gradient(180deg,#fafaf9,#eeedeb)"></div><div class="abs" style="left:884px;top:680px;width:293px;height:1px;z-index:2;background:#cbc8c3"></div><div class="t" style="left:887px;top:658.5px;font-size:13px;color:#333;font-weight:bold;letter-spacing:-0.48px">13</div><div class="t" style="left:908.5px;top:658px;color:#2e2e2e;letter-spacing:-0.65px">LPA_01_01_04</div><div class="t" style="left:1008.5px;top:658px;color:#2e2e2e;letter-spacing:-0.39px">cap</div><div class="t" style="left:1120.5px;top:658px;color:#2e2e2e;">1</div><svg class="abs" style="left:1070px;top:661px" width="13" height="10" viewBox="0 0 13 10"><path d="M0.500 5.500C3 2 10 2 12.500 5.500C10 8.800 3 8.800 0.500 5.500Z" fill="#fff" stroke="#8a4a3a" stroke-width=".8"/><ellipse cx="6.500" cy="5.500" rx="3.300" ry="2.700" fill="#8a4a3a"/><path d="M2.500 2.800l-1-1.500M4.500 2l-.5-1.600M6.500 1.700v-1.500M8.500 2l.5-1.600M10.500 2.800l1-1.500M3 8.300l-.8 1.200M5 8.900l-.4 1.100M6.500 9.100v1M8 8.900l.4 1.100M10 8.300l.8 1.200" stroke="#8a4a3a" stroke-width=".7"/></svg><div class="abs" style="left:905px;top:681px;width:272px;height:30px;background:#e4e3e2"></div><div class="abs" style="left:905px;top:681px;width:100px;height:30px;background:linear-gradient(180deg,#e9e8e7,#dddcdb)"></div><div class="abs" style="left:884px;top:681px;width:21px;height:30px;background:linear-gradient(180deg,#fafaf9,#eeedeb)"></div><div class="abs" style="left:884px;top:710px;width:293px;height:1px;z-index:2;background:#cbc8c3"></div><div class="t" style="left:887px;top:688.5px;font-size:13px;color:#333;font-weight:bold;letter-spacing:-0.48px">14</div><div class="t" style="left:908.5px;top:688px;color:#2e2e2e;letter-spacing:-0.66px">LPA_01_01_04_2</div><div class="t" style="left:1008.5px;top:688px;color:#2e2e2e;letter-spacing:-0.39px">cap</div><div class="t" style="left:1120.5px;top:688px;color:#2e2e2e;">1</div><svg class="abs" style="left:1070px;top:691px" width="13" height="10" viewBox="0 0 13 10"><path d="M0.500 5.500C3 2 10 2 12.500 5.500C10 8.800 3 8.800 0.500 5.500Z" fill="#fff" stroke="#8a4a3a" stroke-width=".8"/><ellipse cx="6.500" cy="5.500" rx="3.300" ry="2.700" fill="#8a4a3a"/><path d="M2.500 2.800l-1-1.500M4.500 2l-.5-1.600M6.500 1.700v-1.500M8.500 2l.5-1.600M10.500 2.800l1-1.500M3 8.300l-.8 1.200M5 8.900l-.4 1.100M6.500 9.100v1M8 8.900l.4 1.100M10 8.300l.8 1.200" stroke="#8a4a3a" stroke-width=".7"/></svg><div class="abs" style="left:905px;top:711px;width:272px;height:30px;background:#e4e3e2"></div><div class="abs" style="left:905px;top:711px;width:100px;height:30px;background:linear-gradient(180deg,#e9e8e7,#dddcdb)"></div><div class="abs" style="left:884px;top:711px;width:21px;height:30px;background:linear-gradient(180deg,#fafaf9,#eeedeb)"></div><div class="abs" style="left:884px;top:740px;width:293px;height:1px;z-index:2;background:#cbc8c3"></div><div class="t" style="left:887px;top:718.5px;font-size:13px;color:#333;font-weight:bold;letter-spacing:-0.48px">15</div><div class="t" style="left:908.5px;top:718px;color:#2e2e2e;letter-spacing:-0.49px">wall_LPA_01_0...</div><div class="t" style="left:1008.5px;top:718px;color:#2e2e2e;letter-spacing:-0.01px">wall</div><div class="t" style="left:1120.5px;top:718px;color:#2e2e2e;">1</div><svg class="abs" style="left:1070px;top:721px" width="13" height="10" viewBox="0 0 13 10"><path d="M0.500 5.500C3 2 10 2 12.500 5.500C10 8.800 3 8.800 0.500 5.500Z" fill="#fff" stroke="#8a4a3a" stroke-width=".8"/><ellipse cx="6.500" cy="5.500" rx="3.300" ry="2.700" fill="#8a4a3a"/><path d="M2.500 2.800l-1-1.500M4.500 2l-.5-1.600M6.500 1.700v-1.500M8.500 2l.5-1.600M10.500 2.800l1-1.500M3 8.300l-.8 1.200M5 8.900l-.4 1.100M6.500 9.100v1M8 8.900l.4 1.100M10 8.300l.8 1.200" stroke="#8a4a3a" stroke-width=".7"/></svg><div class="abs" style="left:905px;top:741px;width:272px;height:3px;background:#e4e3e2"></div><div class="abs" style="left:905px;top:741px;width:100px;height:3px;background:linear-gradient(180deg,#e9e8e7,#dddcdb)"></div><div class="abs" style="left:884px;top:741px;width:21px;height:3px;background:linear-gradient(180deg,#fafaf9,#eeedeb)"></div><div class="abs" style="left:904.0px;top:266.5px;width:1px;height:477px;background:#cbc8c3"></div><div class="abs" style="left:1004.0px;top:266.5px;width:1px;height:477px;background:#cbc8c3"></div><div class="abs" style="left:1064.0px;top:266.5px;width:1px;height:477px;background:#cbc8c3"></div><div class="abs" style="left:1090.0px;top:266.5px;width:1px;height:477px;background:#cbc8c3"></div><div class="abs" style="left:1116.0px;top:266.5px;width:1px;height:477px;background:#cbc8c3"></div><div class="abs" style="left:1176.0px;top:266.5px;width:1px;height:477px;background:#cbc8c3"></div><div class="abs" style="left:1427px;top:265.500px;width:14px;height:478px;background:#edebe9;border-left:1px solid #d6d3cf"></div><div class="abs" style="left:1428px;top:278px;width:12px;height:219px;border:1px solid #b3afa9;border-radius:6px;background:linear-gradient(90deg,#fdfdfd,#eceae8)"></div><svg class="abs" style="left:1430px;top:269px" width="8" height="5"><path d="M0 5L4 0L8 5Z" fill="#9a968f"/></svg><svg class="abs" style="left:1430px;top:735px" width="8" height="5"><path d="M0 0L4 5L8 0Z" fill="#5a5650"/></svg><div class="abs" style="left:1432px;top:383px;width:4px;height:1px;background:#9a968f;box-shadow:0 3px 0 #9a968f,0 6px 0 #9a968f"></div><div class="abs" style="left:1458px;top:368px;width:2px;height:28px;background:#111"></div>
<div id="statusbar" class="abs"><div class="t" style="left:4.5px;top:8px;font-size:13px;color:#3a3a3a;letter-spacing:-0.27px">Model has been created.</div><div class="abs" style="left:1333px;top:2px;width:10px;height:27px;border:1px solid #cfccc7;border-bottom:none;box-shadow:inset 1px 1px 0 #fff"></div><div class="abs" style="left:1346px;top:2px;width:115px;height:27px;border:1px solid #cfccc7;border-bottom:none;box-shadow:inset 1px 1px 0 #fff"></div><div class="abs" style="left:1440.500px;top:6.500px;width:16.500px;height:16.500px;border-radius:50%;background:#3ea60f"></div><div class="t" style="left:1349px;top:7.5px;font-size:13px;color:#3a3a3a;letter-spacing:-0.68px">2.90 GB (9.28 %)</div></div>
<!-- dialog -->
<div class="abs" style="left:347px;top:145px;width:500px;height:271.500px;background:#f2f1ef;border-radius:7px 7px 0 0;box-shadow:0 3px 20px 2px rgba(0,0,0,.75)"></div><div class="abs" style="left:347px;top:145px;width:500px;height:27.500px;background:linear-gradient(180deg,#55534c,#403f3a);border-radius:7px 7px 0 0;border-top:1px solid #6a6861"></div><svg class="abs" style="left:354px;top:151px" width="17" height="17" viewBox="0 0 17 17"><defs><radialGradient id="gcl" cx=".5" cy=".3" r=".8"><stop offset="0" stop-color="#f58a5a"/><stop offset="1" stop-color="#d94f22"/></radialGradient></defs><circle cx="8.500" cy="8.300" r="7.700" fill="url(#gcl)" stroke="#3a2a22" stroke-width=".8"/><path d="M5.800 5.600l5.400 5.400M11.200 5.600l-5.400 5.400" stroke="#4a2a1c" stroke-width="1.300"/></svg><div class="t" style="left:382px;top:151px;font-size:15px;color:#ebe7dd;font-weight:bold;letter-spacing:0.15px">A problem was encountered when creating the model</div><svg class="abs" style="left:359px;top:186px" width="30" height="30" viewBox="0 0 30 30"><defs><linearGradient id="ger" x1="0" y1="0" x2="0" y2="1"><stop offset="0" stop-color="#ef5a5f"/><stop offset=".5" stop-color="#d02a35"/><stop offset="1" stop-color="#9c1226"/></linearGradient></defs><ellipse cx="15" cy="27.500" rx="11" ry="1.800" fill="#000" opacity=".12"/><circle cx="14.800" cy="14.300" r="13.300" fill="url(#ger)"/><path d="M14.800 5.500v11.500" stroke="#fff" stroke-width="2.600" stroke-linecap="round"/><circle cx="14.800" cy="21.600" r="1.800" fill="#fff"/></svg><div class="t" style="left:409.5px;top:184.5px;font-size:13px;color:#3c3c3c;letter-spacing:-0.22px">There may be vessels that only partially intersect.</div><div class="t" style="left:409.5px;top:218px;font-size:13px;color:#3c3c3c;letter-spacing:-0.27px">Please check the faces listed under Details and highlighted in the Face List</div><div class="t" style="left:409.5px;top:235.5px;font-size:13px;color:#3c3c3c;letter-spacing:-0.08px">browser.</div><div class="btn" style="left:646px;top:265px;width:98px;height:25px;background:linear-gradient(180deg,#f4a07e,#ee8256);border-color:#d4774f"></div><div class="t" style="left:657px;top:270px;font-size:13px;color:#4a4038;letter-spacing:-0.29px">Hide Details...</div><div class="btn" style="left:752px;top:265px;width:83px;height:25px"></div><div class="t" style="left:785px;top:270px;font-size:13px;color:#3c3c3c;letter-spacing:-1.15px"><u>O</u>K</div><div class="abs" style="left:358px;top:297px;width:478px;height:1px;background:#c9c5bf"></div><div class="abs" style="left:358px;top:306px;width:465px;height:99.500px;background:#fff;border:1px solid #b5b0aa;overflow:hidden"></div><div class="t" style="left:363px;top:328.5px;font-size:13px;color:#333;letter-spacing:-1.02px">LPA_01_01_01</div><div class="t" style="left:363px;top:345.5px;font-size:13px;color:#333;letter-spacing:-0.94px">LPA_01_01_01_2</div><div class="t" style="left:363px;top:362.5px;font-size:13px;color:#333;letter-spacing:-0.94px">LPA_01_01_01_3</div><div class="t" style="left:363px;top:379.5px;font-size:13px;color:#333;letter-spacing:-0.84px">wall_LPA_01_01_01</div><div class="abs" style="left:359px;top:396px;width:460px;height:8.500px;overflow:hidden"><div class="t" style="left:4px;top:0.5px;font-size:13px;color:#333;letter-spacing:-0.80px">wall_LPA_01_01_01_2</div></div><div class="abs" style="left:823.500px;top:306px;width:12px;height:99.500px;border:1px solid #c5c1bb;border-radius:6px;background:#f4f3f1"></div><div class="abs" style="left:824.500px;top:312px;width:10px;height:80.500px;border-radius:0 0 5px 5px;background:#e3e1de"></div><div class="abs" style="left:823.500px;top:319px;width:12px;height:34px;border:1px solid #aca7a0;border-radius:6px;background:linear-gradient(90deg,#fdfdfd,#edebe9)"></div><div class="abs" style="left:827.500px;top:333px;width:4px;height:1px;background:#8a867f;box-shadow:0 2.500px 0 #8a867f,0 5px 0 #8a867f"></div><svg class="abs" style="left:826.500px;top:312px" width="6" height="4"><path d="M0 4L3 0L6 4Z" fill="#b5b1ab"/></svg><svg class="abs" style="left:826px;top:396px" width="7" height="5"><path d="M0 0L3.500 4.500L7 0Z" fill="#4a4640"/></svg>
</body></html>
